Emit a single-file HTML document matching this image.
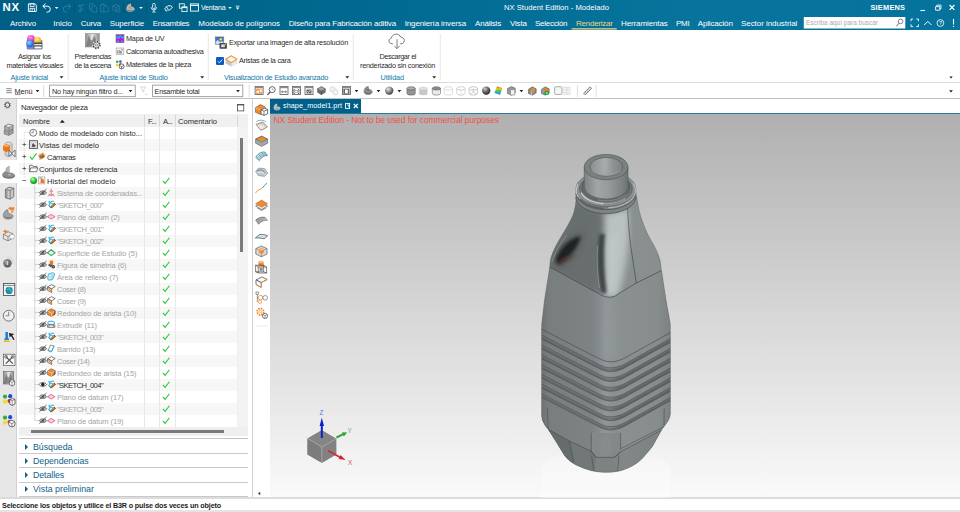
<!DOCTYPE html>
<html><head><meta charset="utf-8"><title>NX Student Edition - Modelado</title>
<style>
*{box-sizing:border-box;margin:0;padding:0}
html,body{width:960px;height:512px;overflow:hidden;background:#fff;font-family:"Liberation Sans",sans-serif}
.t{position:absolute;white-space:nowrap;line-height:12px;height:12px;font-family:"Liberation Sans",sans-serif}
.a{position:absolute}
svg{position:absolute;overflow:visible}
#title{left:0;top:0;width:960px;height:30px;background:linear-gradient(90deg,#005e85 0%,#00678d 30%,#046f97 55%,#06749c 72%,#05739c 100%)}
#ribbon{left:0;top:30px;width:960px;height:52px;background:#fff}
#tb{left:0;top:82px;width:960px;height:16.8px;background:#fff;border-top:1px solid #dcdcdc;border-bottom:1.3px solid #c2c2c2}
.sep{position:absolute;top:34px;width:1px;height:46px;background:#e4e4e4}
.dd{position:absolute;width:0;height:0;border-left:2px solid transparent;border-right:2px solid transparent;border-top:2.4px solid #222}
.combo{position:absolute;top:85px;height:12px;border:1px solid #a8a8a8;background:#fff}
#lbar{left:0;top:99px;width:16.5px;height:399px;background:#e6e6e6;border-right:1px solid #d2d2d2}
#lact{left:0;top:160.3px;width:17px;height:23px;background:#fff}
#nav{left:17px;top:99px;width:235px;height:399px;background:#fff}
#treebg{left:19px;top:114px;width:229px;height:322px;background:#efefef}
#treehd{left:19px;top:114.2px;width:229px;height:12.3px;background:#f0f0f0}
.r{position:absolute;left:19px;width:218px;height:12px;background:#fff}
.r.alt{background:#f7f7f7}
.vl{position:absolute;width:1px;background:#e8e8e8}
.acc{position:absolute;left:19px;width:229px;height:1px;background:#c9c9c9}
.tri{position:absolute;left:25px;width:0;height:0;border-top:3px solid transparent;border-bottom:3px solid transparent;border-left:3.4px solid #0f5f86}
#rline{left:252px;top:99px;width:1px;height:399px;background:#cfcfcf}
#tab{left:270px;top:98.5px;width:91px;height:15px;background:#00608a}
#tabline{left:270px;top:112.5px;width:690px;height:1.4px;background:#2a7a9e}
#view{left:270px;top:114px;width:690px;height:384px;background:linear-gradient(#b0b0b0 0%,#fafafa 100%)}
#status{left:0;top:497.4px;width:960px;height:15px;background:#fff;border-top:2.4px solid #dcdcdc}
#bot{left:0;top:509.8px;width:960px;height:2.2px;background:#e4e4e4}
</style></head>

<body>
<div class="a" id="title"></div>
<div class="a" id="ribbon"></div>
<div class="a" id="tb"></div>
<div class="a" id="lbar"></div><div class="a" id="lact"></div>
<div class="a" id="nav"></div>
<div class="a" id="treebg"></div><div class="a" id="treehd"></div>
<div class="r" style="top:126.5px"></div>
<div class="r alt" style="top:138.5px"></div>
<div class="r" style="top:150.5px"></div>
<div class="r alt" style="top:162.5px"></div>
<div class="r" style="top:174.5px"></div>
<div class="r alt" style="top:186.5px"></div>
<div class="r" style="top:198.5px"></div>
<div class="r alt" style="top:210.5px"></div>
<div class="r" style="top:222.5px"></div>
<div class="r alt" style="top:234.5px"></div>
<div class="r" style="top:246.5px"></div>
<div class="r alt" style="top:258.5px"></div>
<div class="r" style="top:270.5px"></div>
<div class="r alt" style="top:282.5px"></div>
<div class="r" style="top:294.5px"></div>
<div class="r alt" style="top:306.5px"></div>
<div class="r" style="top:318.5px"></div>
<div class="r alt" style="top:330.5px"></div>
<div class="r" style="top:342.5px"></div>
<div class="r alt" style="top:354.5px"></div>
<div class="r" style="top:366.5px"></div>
<div class="r alt" style="top:378.5px"></div>
<div class="r" style="top:390.5px"></div>
<div class="r alt" style="top:402.5px"></div>
<div class="r" style="top:414.5px"></div>
<div class="vl" style="left:144.3px;top:114px;height:312.5px"></div>
<div class="vl" style="left:159.3px;top:114px;height:312.5px"></div>
<div class="vl" style="left:174.5px;top:114px;height:312.5px"></div>
<div class="vl" style="left:144.3px;top:115px;height:11px;background:#d6d6d6"></div>
<div class="vl" style="left:159.3px;top:115px;height:11px;background:#d6d6d6"></div>
<div class="vl" style="left:174.5px;top:115px;height:11px;background:#d6d6d6"></div>
<div class="vl" style="left:237px;top:115px;height:11px;background:#d6d6d6"></div>
<div class="a" style="left:237.5px;top:126.5px;width:10.5px;height:300px;background:#f3f3f3"></div>
<div class="a" style="left:240.2px;top:137.5px;width:2.8px;height:114.5px;background:#7a7a7a"></div>
<div class="a" style="left:31px;top:430px;width:192.5px;height:2.6px;background:#7a7a7a"></div>
<div class="acc" style="top:437.5px;height:1.5px;background:#c4c4c4"></div>
<div class="acc" style="top:453.3px"></div>
<div class="acc" style="top:467.4px"></div>
<div class="acc" style="top:481.5px"></div>
<div class="acc" style="top:495.5px"></div>
<div class="tri" style="top:444px"></div>
<div class="tri" style="top:458px"></div>
<div class="tri" style="top:472.2px"></div>
<div class="tri" style="top:486.3px"></div>
<div class="a" id="rline"></div>
<div class="a" id="view"></div>
<div class="a" id="tab"></div><div class="a" id="tabline"></div>
<div class="a" id="status"></div><div class="a" id="bot"></div>
<svg style="left:0px;top:0px" width="960" height="30" viewBox="0 0 960 30" ><line x1="23.3" y1="2.5" x2="23.3" y2="13" stroke="#00506f" stroke-width="0.8"/><line x1="39.6" y1="2.5" x2="39.6" y2="13" stroke="#00506f" stroke-width="0.8"/><line x1="74.5" y1="2.5" x2="74.5" y2="13" stroke="#00506f" stroke-width="0.8"/><line x1="123.4" y1="2.5" x2="123.4" y2="13" stroke="#00506f" stroke-width="0.8"/><line x1="146.4" y1="2.5" x2="146.4" y2="13" stroke="#00506f" stroke-width="0.8"/><line x1="161.3" y1="2.5" x2="161.3" y2="13" stroke="#00506f" stroke-width="0.8"/><line x1="175.6" y1="2.5" x2="175.6" y2="13" stroke="#00506f" stroke-width="0.8"/><path d="M28.4 3.8h6.6l1.3 1.3v6.4h-7.9z" fill="none" stroke="#fff" stroke-width="0.9"/><rect x="30.2" y="3.8" width="3.8" height="2.6" fill="none" stroke="#fff" stroke-width="0.8"/><rect x="30" y="8.3" width="4.4" height="3.2" fill="none" stroke="#fff" stroke-width="0.8"/><rect x="31.6" y="9.2" width="1.2" height="1.4" fill="#fff"/><path d="M43 6.2h4.3a3 3 0 0 1 0 6h-0.8" fill="none" stroke="#fff" stroke-width="1"/><path d="M45.6 3.6l-2.8 2.6l2.8 2.6" fill="none" stroke="#fff" stroke-width="1"/><path d="M54.8 6.9h3.6l-1.8 2.2z" fill="#fff"/><path d="M70.5 6.2h-4.3a3 3 0 0 0 0 6h0.8" fill="none" stroke="#2f7e9f" stroke-width="1"/><path d="M68 3.6l2.8 2.6l-2.8 2.6" fill="none" stroke="#2f7e9f" stroke-width="1"/><path d="M78 6.5l6.5 -2M78.5 4.5l5 5.8M81.5 7.5l-1.5 3.5" fill="none" stroke="#2f7e9f" stroke-width="0.9"/><circle cx="80" cy="10.8" r="1.1" fill="none" stroke="#2f7e9f" stroke-width="0.8"/><path d="M89.5 3.8h3.6l1.4 1.4v4.6h-5z" fill="none" stroke="#2f7e9f" stroke-width="0.8"/><path d="M91.8 6h3.4l1.6 1.6v4.4h-5z" fill="#00608a" stroke="#2f7e9f" stroke-width="0.8"/><path d="M100.6 4.6h4.6v7.2h-4.6z" fill="none" stroke="#2f7e9f" stroke-width="0.8"/><path d="M103.8 6.2h3l1.6 1.6v4h-4.6z" fill="#00608a" stroke="#2f7e9f" stroke-width="0.8"/><rect x="101.8" y="3.6" width="2.2" height="1.4" fill="#2f7e9f"/><path d="M112.4 6l3.4-1.6l3.4 1.6v4l-3.4 1.6l-3.4-1.6z M112.4 6l3.4 1.6l3.4-1.6 M115.8 7.6v4" fill="none" stroke="#2f7e9f" stroke-width="0.8"/><path d="M117 9.5h3v2.5h-3z" fill="#00608a" stroke="#2f7e9f" stroke-width="0.7"/><path d="M126.3 9.2c0-3.2 2-5.6 4.6-5.8l0.4 3.2c1.6 0.2 3 1 3.4 2.2c0.3 1.6-1.8 3-4.4 3c-2.4 0-4-1.2-4-2.6z" fill="#b9b4ae"/><path d="M127.6 9.8c1 1 3.4 1.4 5.4 0.4" fill="none" stroke="#7b7064" stroke-width="0.9"/><path d="M129 7.2l2.4 1.2" stroke="#8a7a68" stroke-width="0.8"/><path d="M139.2 6.9h3.6l-1.8 2.2z" fill="#fff"/><rect x="152.6" y="3.4" width="2.6" height="5.4" rx="1.3" fill="none" stroke="#fff" stroke-width="0.8"/><path d="M151.2 7.2a2.7 2.7 0 0 0 5.4 0M153.9 10v1.8M152.2 12h3.4" fill="none" stroke="#fff" stroke-width="0.8"/><path d="M164.8 8.8l3-3h3l1.6 1.4l-2.6 2.8h-2.4l-1.2 1.2z" fill="none" stroke="#fff" stroke-width="0.9"/><path d="M166 6.4l2.2 2.8" stroke="#fff" stroke-width="0.8"/><rect x="179.3" y="3.8" width="5" height="4.4" fill="none" stroke="#fff" stroke-width="0.8"/><rect x="181.9" y="6.8" width="5.2" height="4.8" fill="#00648b" stroke="#fff" stroke-width="0.8"/><line x1="181.9" y1="7.6" x2="187.1" y2="7.6" stroke="#fff" stroke-width="1"/><rect x="190.5" y="3.9" width="8" height="7.2" fill="none" stroke="#fff" stroke-width="0.9"/><line x1="190.5" y1="5.4" x2="198.5" y2="5.4" stroke="#fff" stroke-width="1"/><path d="M228.2 6.9h3.6l-1.8 2.2z" fill="#fff"/><line x1="235.8" y1="6.2" x2="239.4" y2="6.2" stroke="#fff" stroke-width="0.8"/><path d="M235.8 7.5h3.6l-1.8 2.2z" fill="#fff"/><line x1="920.4" y1="10.5" x2="925" y2="10.5" stroke="#fff" stroke-width="1.1"/><path d="M935.6 6.6h4.2v3.6h-4.2z M936.8 6.4v-1.3h4.2v3.6h-1.1" fill="none" stroke="#fff" stroke-width="0.9"/><path d="M949.6 5l4.8 4.8M954.4 5l-4.8 4.8" stroke="#fff" stroke-width="1.2"/><rect x="803.8" y="17" width="101.5" height="11.5" fill="#fff"/><circle cx="900.6" cy="21.4" r="2.3" fill="none" stroke="#666" stroke-width="0.8"/><path d="M899 23.2l-2.6 3" stroke="#666" stroke-width="1"/><path d="M911 21.3v-2.3h2.1M916.3 19h2.1v2.3M918.4 24.3v2.3h-2.1M913.1 26.6h-2.1v-2.3" fill="none" stroke="#fff" stroke-width="0.9"/><path d="M924.2 25l3.6-3.6l3.6 3.6" fill="none" stroke="#fff" stroke-width="1"/><circle cx="940.4" cy="23" r="3.4" fill="none" stroke="#fff" stroke-width="0.8"/><text x="940.4" y="25" font-size="5.4" fill="#fff" text-anchor="middle" font-family="Liberation Sans,sans-serif">?</text><line x1="953.5" y1="19" x2="953.5" y2="24.5" stroke="#fff" stroke-width="1.1"/><line x1="953.5" y1="25.8" x2="953.5" y2="27" stroke="#fff" stroke-width="1.1"/><line x1="571.7" y1="28.8" x2="616.7" y2="28.8" stroke="#f0d584" stroke-width="1.2"/></svg>
<svg style="left:0px;top:0px" width="960" height="82" viewBox="0 0 960 82" ><line x1="68.2" y1="34" x2="68.2" y2="80" stroke="#e6e6e6" stroke-width="1"/><line x1="208.3" y1="34" x2="208.3" y2="80" stroke="#e6e6e6" stroke-width="1"/><line x1="353.2" y1="34" x2="353.2" y2="80" stroke="#e6e6e6" stroke-width="1"/><line x1="440.3" y1="34" x2="440.3" y2="80" stroke="#e6e6e6" stroke-width="1"/><path d="M59.6 76.2h3.8l-1.9 2.3z" fill="#222"/><path d="M200.29999999999998 76.2h3.8l-1.9 2.3z" fill="#222"/><path d="M345.40000000000003 76.2h3.8l-1.9 2.3z" fill="#222"/><path d="M432.3 76.2h3.8l-1.9 2.3z" fill="#222"/><path d="M949.3 76.4h3.4l-1.7 2.1z" fill="#222"/><defs><radialGradient id="gm" cx="0.4" cy="0.3" r="0.7"><stop offset="0" stop-color="#ff9af0"/><stop offset="1" stop-color="#c21bb0"/></radialGradient><radialGradient id="gy" cx="0.4" cy="0.3" r="0.7"><stop offset="0" stop-color="#fff08a"/><stop offset="1" stop-color="#f0a500"/></radialGradient><radialGradient id="gb" cx="0.4" cy="0.3" r="0.7"><stop offset="0" stop-color="#8ad2ff"/><stop offset="1" stop-color="#0a62d8"/></radialGradient><linearGradient id="gpref" x1="0" y1="0" x2="1" y2="0"><stop offset="0" stop-color="#8a8a8a"/><stop offset="0.5" stop-color="#e4e4e4"/><stop offset="1" stop-color="#8e8e8e"/></linearGradient><radialGradient id="gball" cx="0.38" cy="0.32" r="0.75"><stop offset="0" stop-color="#e8e8e8"/><stop offset="0.5" stop-color="#8a8a8a"/><stop offset="1" stop-color="#2c2c2c"/></radialGradient></defs><rect x="26.6" y="40" width="15.8" height="9.4" rx="0.8" fill="#7b86c9"/><circle cx="31" cy="38.8" r="3.9" fill="url(#gm)"/><circle cx="37.6" cy="40.4" r="3.6" fill="url(#gy)"/><circle cx="29.8" cy="43.8" r="3.5" fill="url(#gb)"/><rect x="33.6" y="42.6" width="8.6" height="6.2" rx="0.6" fill="#4c4c4c"/><rect x="34.2" y="44" width="7.6" height="1.3" fill="#e8e8e8"/><rect x="34.4" y="46.6" width="7.2" height="1.8" rx="0.5" fill="#fff"/><rect x="85.3" y="33.6" width="14" height="13.4" fill="url(#gpref)" stroke="#8c8c8c" stroke-width="0.6"/><path d="M86 46.6c1.2-2 1.8-9 3-11c1 2 1.4 5 2.6 5c1.2 0 1.600-3.400 2.800-5c1.200 2 2.400 9 4.200 11z" fill="#6e6e6e" opacity="0.75"/><circle cx="96.5" cy="45" r="4.300" fill="#fff"/><circle cx="96.5" cy="45" r="3.500" fill="none" stroke="#444" stroke-width="1.500" stroke-dasharray="1.374 1.374"/><circle cx="96.5" cy="45" r="2.800" fill="#fff" stroke="#444" stroke-width="0.7"/><circle cx="96.5" cy="45" r="1.100" fill="none" stroke="#444" stroke-width="0.600"/><rect x="116" y="34.6" width="8" height="8" fill="#00c8e6" stroke="#555" stroke-width="0.5"/><path d="M116.3 38.600h3.700v-2.200h0l1.600 2.200h2.200v3.700h-7.500z" fill="#e800d8"/><path d="M116.4 34.900l1.800 2.400l1.800-2.400z M120.200 34.900l1.800 2.400l1.800-2.400z" fill="#e800d8"/><path d="M117 42.2l1.200-2.400l1.200 2.400z M120.800 42.200l1.200-2.400l1.200 2.400z" fill="#00c8e6"/><rect x="116.2" y="48" width="7.6" height="6.6" fill="#f2f2f2" stroke="#9a9a9a" stroke-width="0.6"/><path d="M117.300 53.400v-3.200h1.200v3.200M119.200 53.400v-3.800l1.400 1.800l1.200-1.200v3.200z" fill="#8a8a8a"/><rect x="120.8" y="48.800" width="2.200" height="1.600" fill="#b8b8b8"/><circle cx="117.2" cy="61.8" r="1.3" fill="#2fae2f"/><circle cx="120.4" cy="61.6" r="1.3" fill="#3b58d8"/><circle cx="117.2" cy="65" r="1.3" fill="#e8d21a"/><circle cx="120.4" cy="64.6" r="1.3" fill="#d83030"/><circle cx="121.6" cy="66.4" r="2.5" fill="#fff" stroke="#333" stroke-width="0.7"/><path d="M119.600 65.600l2 1l2-1M121.600 66.600v2.200" fill="none" stroke="#333" stroke-width="0.6"/><rect x="215.3" y="36.800" width="8.400" height="7.600" fill="#3a78c8" stroke="#555" stroke-width="0.5" stroke-dasharray="0.8 0.5"/><path d="M215.600 44.100v-2.400l2.200-1.600l2.400 1.800l1.400-0.800l1.800 1.200v1.800z" fill="#d8d8e8"/><circle cx="220.800" cy="39.200" r="1.200" fill="#ffe020"/><rect x="219.500" y="43" width="7.400" height="5.700" rx="0.600" fill="#4a4a4a"/><rect x="221.200" y="44.400" width="3.600" height="2.800" fill="#dcdcdc"/><rect x="224.800" y="43.800" width="1.300" height="0.900" fill="#ffe020"/><rect x="216" y="57" width="8" height="8" rx="1.2" fill="#0a5bc4"/><path d="M217.800 61.200l1.600 1.600l2.900-3.200" fill="none" stroke="#fff" stroke-width="0.9"/><path d="M225.700 59.200l5.600-3.400l5.600 3.400v4.200l-5.600 3.200l-5.600-3.200z" fill="#c4c4c4"/><path d="M231.300 62.600v4l5.600-3.200v-4.200z" fill="#e9e9e9"/><path d="M225.700 59.200l5.600-3.400l5.600 3.400l-5.600 3.400z" fill="#f7f7f7" stroke="#f0973a" stroke-width="1.100" stroke-linejoin="round"/><path d="M392.800 43.800h-0.600c-1.900 0-3.200-1.300-3.200-2.900c0-1.500 1.100-2.600 2.500-2.800c0.300-2.300 2.300-4 4.700-4c2 0 3.700 1.100 4.400 2.900c2.100 0.100 3.700 1.600 3.700 3.500c0 1.900-1.500 3.300-3.500 3.300h-0.400" fill="none" stroke="#5a5a5a" stroke-width="0.800" stroke-linecap="round"/><path d="M397 39.200v9M394.300 46l2.700 2.700l2.700-2.700" fill="none" stroke="#5a5a5a" stroke-width="0.800"/></svg>
<svg style="left:0px;top:0px" width="960" height="100" viewBox="0 0 960 100" ><line x1="6.3" y1="88.7" x2="11.7" y2="88.7" stroke="#555" stroke-width="0.7"/><line x1="6.3" y1="90.7" x2="11.7" y2="90.7" stroke="#555" stroke-width="0.7"/><line x1="6.3" y1="92.7" x2="11.7" y2="92.7" stroke="#555" stroke-width="0.7"/><line x1="15" y1="94.600" x2="20.600" y2="94.600" stroke="#2b2b2b" stroke-width="0.5"/><path d="M35.6 89.9h3.8l-1.9 2.3z" fill="#222"/><line x1="43.7" y1="85" x2="43.7" y2="97" stroke="#dcdcdc" stroke-width="1"/><rect x="49.6" y="85.1" width="85.6" height="11.600" fill="#fff" stroke="#8e8e8e" stroke-width="0.8"/><path d="M128.6 89.9h3.8l-1.9 2.3z" fill="#222"/><path d="M140.600 87h5l-1.800 2.600v2.400l-1.400-0.800v-1.600z" fill="none" stroke="#c8c8c8" stroke-width="0.7"/><path d="M145 92.500l2.800 2.200l-1.600 0.200z" fill="#d0d0d0"/><rect x="152.6" y="85.1" width="90.2" height="11.600" fill="#fff" stroke="#8e8e8e" stroke-width="0.8"/><path d="M236.1 89.9h3.8l-1.9 2.3z" fill="#222"/><line x1="249.2" y1="85" x2="249.2" y2="97" stroke="#dcdcdc" stroke-width="1"/><rect x="255.1" y="86.500" width="8" height="8" fill="#fff" stroke="#555" stroke-width="0.8"/><rect x="255.1" y="86.500" width="8" height="1.700" fill="#8c8c8c"/><rect x="256" y="88.800" width="6.200" height="5" fill="#f59a3c"/><rect x="256.600" y="90.600" width="2.400" height="2.200" fill="#fff"/><rect x="259.800" y="89.400" width="1.800" height="2.600" fill="#fff"/><circle cx="272.2" cy="89.600" r="3" fill="#fff" stroke="#555" stroke-width="0.9"/><path d="M270.200 92l-2.800 2.900" stroke="#555" stroke-width="1.300"/><path d="M272.200 88v1.800h1.400" fill="none" stroke="#777" stroke-width="0.6"/><rect x="280" y="86.500" width="8" height="8" fill="#fff" stroke="#555" stroke-width="0.8"/><rect x="280" y="86.500" width="8" height="1.700" fill="#8c8c8c"/><path d="M281.500 91.800h5M281.500 91.800l1.200-1M281.500 91.800l1.200 1M286.500 91.800l-1.200-1M286.500 91.800l-1.200 1" stroke="#333" stroke-width="0.6" fill="none"/><rect x="292.4" y="86.500" width="8" height="8" fill="#fff" stroke="#555" stroke-width="0.8"/><rect x="292.4" y="86.500" width="8" height="1.700" fill="#8c8c8c"/><path d="M294.800 89.500h-1v4h1M298 89.500h1v4h-1" stroke="#333" stroke-width="0.7" fill="none"/><rect x="295" y="90.300" width="2.800" height="2.400" fill="none" stroke="#777" stroke-width="0.5"/><rect x="305" y="86.500" width="8" height="8" fill="#fff" stroke="#555" stroke-width="0.8"/><rect x="305" y="86.500" width="8" height="1.700" fill="#8c8c8c"/><rect x="306.500" y="89.500" width="5" height="4" fill="#666"/><path d="M307.200 91.400l1.200 1.200l2.200-2.600" stroke="#fff" stroke-width="0.7" fill="none"/><path d="M317.200 89l4.200-2.400l4.200 2.400v3.600l-4.200 2.400l-4.200-2.400z" fill="#6e6e6e"/><path d="M317.200 89l4.200 2.200l4.200-2.200l-4.200-2.400z" fill="#a4a4a4" stroke="#444" stroke-width="0.5"/><path d="M321.400 91.200v3.800" stroke="#333" stroke-width="0.5"/><circle cx="332.6" cy="89.300" r="2.600" fill="#f4f4f4" stroke="#d2d2d2" stroke-width="0.8"/><circle cx="335.4" cy="92.200" r="2.600" fill="#f4f4f4" stroke="#d2d2d2" stroke-width="0.8"/><rect x="342.4" y="86.500" width="8" height="8" fill="#fff" stroke="#555" stroke-width="0.8"/><rect x="342.4" y="86.500" width="8" height="1.700" fill="#8c8c8c"/><rect x="343.300" y="88.700" width="6.200" height="5.200" fill="#6a6a6a"/><rect x="345" y="89.600" width="2.800" height="3.600" fill="#fff"/><path d="M354.6 89.9h3.8l-1.9 2.3z" fill="#222"/><path d="M364 91.600c0-3 1.800-5 4.200-5.200l0.400 2.800c1.600 0.200 3.200 1 3.600 2.200c0.300 1.800-1.800 3.200-4.400 3.200c-2.400 0-3.800-1.400-3.800-3z" fill="#8f8f8f" stroke="#555" stroke-width="0.5"/><path d="M365.200 92.400c1.200 1 3.600 1.200 5.600 0.200M366.400 89.400l3 1.400" fill="none" stroke="#444" stroke-width="0.6"/><path d="M376.6 89.9h3.8l-1.9 2.3z" fill="#222"/><circle cx="389.2" cy="90.600" r="4.200" fill="url(#gball)"/><path d="M397.5 89.9h3.8l-1.9 2.3z" fill="#222"/><path d="M407 88.400v5a4.100 1.700 0 0 0 8.200 0v-5z" fill="#959595" stroke="#555" stroke-width="0.6"/><ellipse cx="411.1" cy="88.400" rx="4.100" ry="1.700" fill="#b0b0b0" stroke="#555" stroke-width="0.6"/><path d="M419.2 88.400v5a4.100 1.700 0 0 0 8.200 0v-5z" fill="#c6c6c6" stroke="#cfcfcf" stroke-width="0.3"/><ellipse cx="423.3" cy="88.400" rx="4.100" ry="1.700" fill="#dedede" stroke="#cfcfcf" stroke-width="0.3"/><path d="M432.3 88.400v5a4.100 1.700 0 0 0 8.200 0v-5z" fill="#ececec" stroke="#666" stroke-width="0.6"/><ellipse cx="436.40000000000003" cy="88.400" rx="4.100" ry="1.700" fill="#8a8a8a" stroke="#666" stroke-width="0.6"/><path d="M444.2 88.400v5a4.100 1.700 0 0 0 8.200 0v-5z" fill="#fff" stroke="#c4c4c4" stroke-width="0.6"/><ellipse cx="448.3" cy="88.400" rx="4.100" ry="1.700" fill="#fff" stroke="#c4c4c4" stroke-width="0.6"/><path d="M456.8 88.400v5a4.100 1.700 0 0 0 8.200 0v-5z" fill="#fff" stroke="#b4b4b4" stroke-width="0.6"/><ellipse cx="460.90000000000003" cy="88.400" rx="4.100" ry="1.700" fill="#fff" stroke="#b4b4b4" stroke-width="0.6"/><path d="M460.900 90.100v5" stroke="#b4b4b4" stroke-width="0.5" stroke-dasharray="1 0.6"/><path d="M469.2 88.400v5a4.100 1.700 0 0 0 8.200 0v-5z" fill="#fff" stroke="#a4a4a4" stroke-width="0.6"/><ellipse cx="473.3" cy="88.400" rx="4.100" ry="1.700" fill="#fff" stroke="#a4a4a4" stroke-width="0.6"/><path d="M470 94l3.300-2l3.300 2M473.300 88.400v3.600" stroke="#a4a4a4" stroke-width="0.5" fill="none"/><defs><radialGradient id="gball2" cx="0.36" cy="0.3" r="0.75"><stop offset="0" stop-color="#d0d0d0"/><stop offset="0.45" stop-color="#6e6e6e"/><stop offset="1" stop-color="#1e1e1e"/></radialGradient><linearGradient id="grain" x1="0" y1="0" x2="0" y2="1"><stop offset="0" stop-color="#f04a28"/><stop offset="0.3" stop-color="#f0c828"/><stop offset="0.55" stop-color="#38c848"/><stop offset="0.8" stop-color="#28a8e8"/><stop offset="1" stop-color="#2848d8"/></linearGradient></defs><circle cx="486.200" cy="90.600" r="4.200" fill="url(#gball2)"/><path d="M497 86.400l5.400 1.600l-2.400 6.800l-5.600-1.800z" fill="url(#grain)"/><path d="M507.400 88.600l3.800-2l4 1.400v5l-3.600 2.200l-4.200-1.600z" fill="#9a9a9a" stroke="#555" stroke-width="0.5"/><path d="M510.400 89.600h4.400v5.400h-4.400z" fill="#f2f2f2" stroke="#666" stroke-width="0.5"/><path d="M519.5 89.9h3.8l-1.9 2.3z" fill="#222"/><path d="M528.400 89.400l3.800-2.600l4 2v4l-3.800 2.400l-4-1.800z" fill="#8a8a8a" stroke="#444" stroke-width="0.5"/><path d="M530.400 91l2.600-3.400l2.200 1.200l-1.600 4z" fill="#f08a2c"/><path d="M531.400 95v-3.400" stroke="#fff" stroke-width="0.6"/><path d="M541.400 89.400l3.800-2.600l4 2v4l-3.800 2.400l-4-1.800z" fill="#9a9a9a" stroke="#444" stroke-width="0.5"/><path d="M544.400 87.600l3.400 1.400v3.600l-3.400-1z" fill="#f07a1c"/><ellipse cx="546.800" cy="93" rx="2.600" ry="2" fill="#18a838"/><ellipse cx="546.800" cy="93" rx="1" ry="0.700" fill="#d8f0d8"/><rect x="554.600" y="86.700" width="7.400" height="7.800" rx="1.300" fill="#f4f4f4" stroke="#9a9a9a" stroke-width="0.8"/><line x1="563.200" y1="87.3" x2="570.800" y2="87.3" stroke="#c4c4c4" stroke-width="0.6"/><line x1="563.200" y1="89.1" x2="570.800" y2="89.1" stroke="#c4c4c4" stroke-width="0.6"/><line x1="563.200" y1="90.9" x2="570.800" y2="90.9" stroke="#c4c4c4" stroke-width="0.6"/><line x1="563.200" y1="92.7" x2="570.800" y2="92.7" stroke="#c4c4c4" stroke-width="0.6"/><line x1="563.200" y1="94.3" x2="570.800" y2="94.3" stroke="#c4c4c4" stroke-width="0.6"/><line x1="567" y1="87" x2="567" y2="94.500" stroke="#d4d4d4" stroke-width="0.5"/><line x1="577.4" y1="85" x2="577.4" y2="97" stroke="#e0e0e0" stroke-width="1"/><path d="M583.600 93.200l6.400-6.400l1.600 1.600l-6.400 6.400z" fill="#dedede" stroke="#555" stroke-width="0.7"/><path d="M585.600 92.400l0.800 0.800M587 91l0.800 0.800M588.400 89.600l0.800 0.800" stroke="#555" stroke-width="0.4"/><line x1="596.200" y1="85" x2="596.200" y2="97" stroke="#e0e0e0" stroke-width="1"/><path d="M949.1 90.30000000000001h3.8l-1.9 2.3z" fill="#222"/></svg>
<svg style="left:0px;top:0px" width="20" height="512" viewBox="0 0 20 512" ><circle cx="7.400" cy="105" r="2.300" fill="none" stroke="#444" stroke-width="0.9"/><circle cx="7.400" cy="105" r="3.100" fill="none" stroke="#444" stroke-width="0.9" stroke-dasharray="1 1.430"/><path d="M4.200 130.600l4-2l5 1.200v3.400l-4.400 2.200l-4.600-1.400z" fill="#a2a2a2" stroke="#5a5a5a" stroke-width="0.5"/><path d="M4.200 130.600l4-2l5 1.200l-4.400 2z" fill="#e2e2e2" stroke="#5a5a5a" stroke-width="0.5"/><path d="M4.600 126.200l4-2l4.600 1.200v3.400l-4.200 2l-4.400-1.200z" fill="#acacac" stroke="#5a5a5a" stroke-width="0.5"/><path d="M4.600 126.200l4-2l4.600 1.200l-4.200 2z" fill="#ececec" stroke="#5a5a5a" stroke-width="0.5"/><path d="M9 127.400v3.400" stroke="#5a5a5a" stroke-width="0.5"/><path d="M8.800 131.800v3.400" stroke="#5a5a5a" stroke-width="0.5"/><ellipse cx="8.600" cy="143.800" rx="3.500" ry="1.700" fill="#e0e0e0" stroke="#777" stroke-width="0.5"/><path d="M5.100 143.800v10.800a3.500 1.700 0 0 0 7 0v-10.800" fill="#cfcfcf" stroke="#777" stroke-width="0.5"/><path d="M3 145.800l3.400-1.600l3.600 1.400v4.800l-3.600 1.600l-3.400-1.600z" fill="#f07818"/><path d="M3 145.800l3.400 1.400l3.600-1.600l-3.600-1.400z" fill="#f8a858"/><path d="M6.400 147.200v4.800" stroke="#d86408" stroke-width="0.5"/><path d="M9 150.400l6 6.400v-6.800l-6 6.400z" fill="#fff" stroke="#444" stroke-width="0.7" stroke-linejoin="round"/><path d="M2.600 174.600c0-1.400 1.400-2.600 3.200-3.200l0.200-2.200c0.400-1.600 1.800-2.600 3.400-2.600v6.200c3 0.200 5.400 1.400 5.400 2.800c0 1.600-2.800 2.600-6.200 2.600c-3.400 0-6-1.200-6-3.600z" fill="#8c8c8c" stroke="#666" stroke-width="0.4"/><path d="M6 169.200c0.400-1.600 1.800-2.600 3.400-2.600v6.200l-3.400-1.200z" fill="#b4b4b4"/><path d="M2.600 174.600c0.400 2 3 3 6 3c3.400 0 6.200-1 6.200-2.600v1c0 1.600-2.800 2.600-6.200 2.600c-3.400 0-6-1.200-6-3z" fill="#6e6e6e"/><ellipse cx="9.600" cy="174.800" rx="2" ry="0.900" fill="#d4d4d4" stroke="#666" stroke-width="0.4"/><path d="M9.400 166.600v6.200" stroke="#e0e0e0" stroke-width="0.5"/><path d="M5.400 189.400l3.400-2.200l5 1v8.400l-3.600 2.600l-4.800-1.400z" fill="#c8c8c8" stroke="#555" stroke-width="0.7"/><path d="M5.400 189.400l4.800 1.200l3.600-2.400M10.200 190.600v8.600M6.800 190.200v7.800" fill="none" stroke="#555" stroke-width="0.6"/><g transform="translate(0,3.2)"><path d="M3.200 212.800c0-3.200 2-6 4.600-6.400l0.600 3.800c2.200 0.200 4.200 1.200 4.800 2.400c0.400 2-2 3.400-5 3.400c-3 0-5-1.200-5-3.200z" fill="#a2a2a2" stroke="#666" stroke-width="0.5"/><path d="M4.800 213.600c1.600 1.200 4.400 1.400 6.600 0.400" fill="none" stroke="#555" stroke-width="0.7"/><path d="M8.600 205.200l2.400-1.400v2.800zM13.800 204.200l-2.600 1l2.400 1.600zM11.600 206.400l0.400 3.400M13.200 206.600l-0.800 3.200" stroke="#f07818" stroke-width="0.8" fill="#f07818"/></g><path d="M3.400 234.400l4.800-2.600l4.600 2v4.400l-4.800 2.600l-4.600-2z" fill="#e6e6e6" stroke="#555" stroke-width="0.6"/><path d="M3.400 234.400l4.600 2l4.800-2.600M8 236.400v4.400" fill="none" stroke="#555" stroke-width="0.6"/><circle cx="12" cy="236.600" r="2.400" fill="#fff" stroke="#888" stroke-width="0.5"/><path d="M3 231.200l3-1.800v1.400h2.400v1h-2.400v1.400z" fill="#f07818"/><defs><radialGradient id="gi" cx="0.4" cy="0.35" r="0.7"><stop offset="0" stop-color="#a8a8a8"/><stop offset="1" stop-color="#4a4a4a"/></radialGradient></defs><path d="M7 257.200a5.600 5.600 0 0 1 6 6" fill="none" stroke="#cfcfcf" stroke-width="0.8"/><circle cx="7.400" cy="263.200" r="4.200" fill="url(#gi)"/><rect x="6.900" y="261.400" width="1" height="3.600" fill="#ddd"/><rect x="3.400" y="283.400" width="11.400" height="12" fill="#f4f4f4" stroke="#444" stroke-width="0.8"/><line x1="3.400" y1="285.400" x2="14.800" y2="285.400" stroke="#444" stroke-width="0.6"/><circle cx="9.100" cy="290.400" r="3.600" fill="#1890a8"/><path d="M6.600 289.200c1.200 0.600 2.200-0.800 3.400 0.200c0.800 0.800 0.200 2 1.600 2.400M8.400 287.200c0.400 1 1.600 0.800 2 0" fill="none" stroke="#9adcec" stroke-width="0.6"/><circle cx="8.700" cy="315.700" r="5.400" fill="#f0f0f0" stroke="#555" stroke-width="0.8"/><path d="M8.700 311.800v4h-3" fill="none" stroke="#555" stroke-width="0.7"/><g transform="translate(0,2.5)"><path d="M5.400 329.400h2.600v5.600l1.400 2.600h-5.400l1.400-2.600z" fill="#1e7fe0"/><path d="M3.800 338.800h5.800" stroke="#e8b800" stroke-width="1.400"/><path d="M9 330.400l5.400 1.200l-2.200 1.200l2.400 4.200l-1.200 0.600l-2.400-4.200l-1.400 1.600z" fill="#222"/></g><g transform="translate(0,2)"><rect x="3.600" y="352.200" width="11.400" height="11.200" fill="#f6f6f6" stroke="#555" stroke-width="0.7"/><path d="M5.600 354.400l7.200 7.200M13 354.400l-7.200 7.200" stroke="#555" stroke-width="1.300"/><circle cx="6" cy="354.800" r="1.400" fill="none" stroke="#555" stroke-width="0.7"/><circle cx="12.600" cy="354.800" r="1.400" fill="none" stroke="#555" stroke-width="0.7"/></g><g transform="translate(0,3)"><rect x="3.400" y="368.400" width="10.200" height="12.600" fill="url(#gpref)" stroke="#666" stroke-width="0.6"/><path d="M3.800 380.600c1-2 1.400-8 2.400-10c0.800 1.800 1.200 4 2.200 4c1 0 1.400-2.400 2.400-4c1 2 1.600 8 2.400 10z" fill="#555" opacity="0.600"/><path d="M9.400 378l2.600-1.400l2.600 1.400v3.600l-2.600 1.400l-2.600-1.400z" fill="#fff" stroke="#333" stroke-width="0.6"/><path d="M9.400 378l2.600 1.400l2.600-1.400M12 379.400v3.600" fill="none" stroke="#333" stroke-width="0.5"/></g><circle cx="5" cy="396.6" r="2.100" fill="#2fae3f"/><circle cx="10.200" cy="396.2" r="2.100" fill="#2848d8"/><circle cx="5" cy="401.6" r="2.100" fill="#f0e020"/><circle cx="9.600" cy="401" r="2.100" fill="#d82828"/><path d="M9.800 399.6l2.800-1l2.400 0.800v4.600l-2.800 1.400l-2.400-1.200z" fill="#fff" stroke="#333" stroke-width="0.7"/><path d="M9.800 399.6l2.400 1l2.800-1.200M12.200 400.6v4.800" fill="none" stroke="#333" stroke-width="0.5"/><circle cx="5" cy="417.6" r="2.100" fill="#2fae3f"/><circle cx="10.200" cy="417.2" r="2.100" fill="#2848d8"/><circle cx="5" cy="422.6" r="2.100" fill="#f0e020"/><circle cx="9.600" cy="422" r="2.100" fill="#d82828"/><circle cx="11.800" cy="423.6" r="3.300" fill="#fff" stroke="#333" stroke-width="0.7"/><path d="M9.200 422.4l2.600 1.200l2.600-1.200M11.800 423.6v3" fill="none" stroke="#333" stroke-width="0.600"/></svg>
<svg style="left:0px;top:0px" width="252" height="440" viewBox="0 0 252 440" ><rect x="237.600" y="104.500" width="6.200" height="6.400" fill="#fff" stroke="#333" stroke-width="0.7"/><line x1="237.600" y1="105" x2="243.800" y2="105" stroke="#333" stroke-width="0.7"/><path d="M59.800 122.800h5l-2.500-3z" fill="#222"/><line x1="24.250" y1="132.5" x2="24.250" y2="178.0" stroke="#aaaaaa" stroke-width="0.55" stroke-dasharray="0.6 0.8"/><line x1="24.250" y1="132.5" x2="29" y2="132.5" stroke="#aaaaaa" stroke-width="0.55" stroke-dasharray="0.6 0.8"/><line x1="26.500" y1="144.5" x2="29" y2="144.5" stroke="#aaaaaa" stroke-width="0.55" stroke-dasharray="0.6 0.8"/><line x1="26.500" y1="156.5" x2="29" y2="156.5" stroke="#aaaaaa" stroke-width="0.55" stroke-dasharray="0.6 0.8"/><line x1="26.500" y1="168.5" x2="29" y2="168.5" stroke="#aaaaaa" stroke-width="0.55" stroke-dasharray="0.6 0.8"/><rect x="22.200" y="142.4" width="4.200" height="4.200" fill="#fff"/><line x1="22.400" y1="144.5" x2="26.100" y2="144.5" stroke="#3a3a3a" stroke-width="0.7"/><line x1="24.250" y1="142.65" x2="24.250" y2="146.35" stroke="#3a3a3a" stroke-width="0.7"/><rect x="22.200" y="154.4" width="4.200" height="4.200" fill="#fff"/><line x1="22.400" y1="156.5" x2="26.100" y2="156.5" stroke="#3a3a3a" stroke-width="0.7"/><line x1="24.250" y1="154.65" x2="24.250" y2="158.35" stroke="#3a3a3a" stroke-width="0.7"/><rect x="22.200" y="166.4" width="4.200" height="4.200" fill="#fff"/><line x1="22.400" y1="168.5" x2="26.100" y2="168.5" stroke="#3a3a3a" stroke-width="0.7"/><line x1="24.250" y1="166.65" x2="24.250" y2="170.35" stroke="#3a3a3a" stroke-width="0.7"/><rect x="22.200" y="178.4" width="4.200" height="4.200" fill="#fff"/><line x1="22.400" y1="180.5" x2="26.100" y2="180.5" stroke="#3a3a3a" stroke-width="0.7"/><circle cx="33.200" cy="132.7" r="3.500" fill="#fff" stroke="#444" stroke-width="0.7"/><path d="M33.200 130.3v2.600h-2" fill="none" stroke="#444" stroke-width="0.600"/><rect x="29.500" y="140.7" width="8" height="7.800" fill="#f2f2f2" stroke="#444" stroke-width="0.8"/><rect x="31" y="142.1" width="5" height="5" fill="#fff" stroke="#888" stroke-width="0.4"/><path d="M31.800 145.9c0-1.600 0.800-2.800 2-3l0.200 1.600c0.800 0 1.600 0.600 1.600 1.200c0 0.800-1 1.200-2 1.200c-1 0-1.800-0.400-1.800-1z" fill="#555"/><path d="M30 156.7l2 2.600l4.600-6" fill="none" stroke="#20c838" stroke-width="1.100"/><path d="M38 155.3l5-3l2.400 4.400l-5 3z" fill="#f59a3c"/><path d="M39.400 156.3l4-2l1.200 2.400l-2.400 2l-2.200 0.400z" fill="#8a6a4a"/><path d="M38.200 159.9l3-2.400l0.800 1.200z" fill="#c8a888"/><path d="M43.600 153.5l1.800 0.600l-0.600 1.600" fill="none" stroke="#f8c080" stroke-width="0.600"/><path d="M29.600 171.7v-6.400h2.800l0.800 1.200h3.800v1.400" fill="none" stroke="#444" stroke-width="0.7"/><path d="M29.600 171.7l1.200-3.800h7l-1.200 3.800z" fill="#fff" stroke="#444" stroke-width="0.7" stroke-linejoin="round"/><defs><radialGradient id="ggr" cx="0.38" cy="0.32" r="0.7"><stop offset="0" stop-color="#c8ffc0"/><stop offset="0.45" stop-color="#38d838"/><stop offset="1" stop-color="#0c8a1c"/></radialGradient></defs><circle cx="33.600" cy="180.5" r="3.500" fill="url(#ggr)"/><rect x="38.300" y="176.9" width="6.600" height="7" fill="#f4f4f4" stroke="#9a9a9a" stroke-width="0.6"/><rect x="40.600" y="179.5" width="3.600" height="3.600" fill="#f07818"/><path d="M39.400 178.1h2.400v2" fill="none" stroke="#555" stroke-width="0.6"/><line x1="24.250" y1="180.5" x2="29.800" y2="180.5" stroke="#9a9a9a" stroke-width="0" /><line x1="34.750" y1="184.5" x2="34.750" y2="420.5" stroke="#c4c4c4" stroke-width="0.7"/><path d="M163 180.8l2.100 2.500l4.300-5.600" fill="none" stroke="#1fc737" stroke-width="1.050"/><path d="M163 192.8l2.100 2.500l4.300-5.600" fill="none" stroke="#1fc737" stroke-width="1.050"/><path d="M163 204.8l2.100 2.500l4.300-5.600" fill="none" stroke="#1fc737" stroke-width="1.050"/><path d="M163 216.8l2.100 2.500l4.300-5.600" fill="none" stroke="#1fc737" stroke-width="1.050"/><path d="M163 228.8l2.100 2.500l4.300-5.600" fill="none" stroke="#1fc737" stroke-width="1.050"/><path d="M163 240.8l2.100 2.500l4.300-5.600" fill="none" stroke="#1fc737" stroke-width="1.050"/><path d="M163 252.8l2.100 2.500l4.300-5.600" fill="none" stroke="#1fc737" stroke-width="1.050"/><path d="M163 264.8l2.100 2.500l4.300-5.600" fill="none" stroke="#1fc737" stroke-width="1.050"/><path d="M163 276.8l2.100 2.500l4.300-5.600" fill="none" stroke="#1fc737" stroke-width="1.050"/><path d="M163 288.8l2.100 2.500l4.300-5.600" fill="none" stroke="#1fc737" stroke-width="1.050"/><path d="M163 300.8l2.100 2.500l4.300-5.600" fill="none" stroke="#1fc737" stroke-width="1.050"/><path d="M163 312.8l2.100 2.500l4.300-5.600" fill="none" stroke="#1fc737" stroke-width="1.050"/><path d="M163 324.8l2.100 2.500l4.300-5.600" fill="none" stroke="#1fc737" stroke-width="1.050"/><path d="M163 336.8l2.100 2.500l4.300-5.600" fill="none" stroke="#1fc737" stroke-width="1.050"/><path d="M163 348.8l2.100 2.500l4.300-5.600" fill="none" stroke="#1fc737" stroke-width="1.050"/><path d="M163 360.8l2.100 2.500l4.300-5.600" fill="none" stroke="#1fc737" stroke-width="1.050"/><path d="M163 372.8l2.100 2.500l4.300-5.600" fill="none" stroke="#1fc737" stroke-width="1.050"/><path d="M163 384.8l2.100 2.500l4.300-5.600" fill="none" stroke="#1fc737" stroke-width="1.050"/><path d="M163 396.8l2.100 2.500l4.300-5.600" fill="none" stroke="#1fc737" stroke-width="1.050"/><path d="M163 408.8l2.100 2.500l4.300-5.600" fill="none" stroke="#1fc737" stroke-width="1.050"/><path d="M163 420.8l2.100 2.500l4.300-5.600" fill="none" stroke="#1fc737" stroke-width="1.050"/><line x1="34.750" y1="192.5" x2="38.500" y2="192.5" stroke="#c4c4c4" stroke-width="0.7"/><path d="M39.200 192.7c1.600-2.500 5.800-2.500 7.400 0c-1.600 2.500-5.800 2.500-7.400 0z" fill="#b8b8b8" stroke="#555" stroke-width="0.7"/><circle cx="42.900" cy="192.7" r="1.300" fill="#666"/><path d="M39.400 195.7l7-6.600" stroke="#444" stroke-width="0.8"/><path d="M51.200 188.7v5.400M51.200 194.1l-3.400 2M51.200 194.1l3.400 2M49.400 191.9l1.800-1.400l1.800 1.400M48.600 193.9l2.600 1.800l2.600-1.800" fill="none" stroke="#e0607c" stroke-width="0.8"/><line x1="34.750" y1="204.5" x2="38.500" y2="204.5" stroke="#c4c4c4" stroke-width="0.7"/><path d="M39.200 204.7c1.600-2.500 5.800-2.500 7.400 0c-1.600 2.500-5.800 2.500-7.400 0z" fill="#b8b8b8" stroke="#555" stroke-width="0.7"/><circle cx="42.900" cy="204.7" r="1.300" fill="#666"/><path d="M39.400 207.7l7-6.600" stroke="#444" stroke-width="0.8"/><path d="M48.200 202.1l1.400-0.800v5.800M50.800 201.3h3.400M51 201.3l-0.400 2.400c1.800-0.600 3 0.200 3 1.400c0 1.600-1.800 2.400-3.600 1.800M48 204.7c1.200 1.600 1.600 2.400 3 3" fill="none" stroke="#28a8d8" stroke-width="0.9"/><path d="M50.600 207.9l0.600-2l3-2.800l1.400 1.400l-3 2.800z" fill="#c87828" stroke="#3a2a1a" stroke-width="0.4"/><path d="M54.200 203.1l1.400 1.400" stroke="#333" stroke-width="0.7"/><line x1="34.750" y1="216.5" x2="38.500" y2="216.5" stroke="#c4c4c4" stroke-width="0.7"/><path d="M39.200 216.7c1.600-2.500 5.800-2.500 7.400 0c-1.600 2.500-5.800 2.500-7.400 0z" fill="#b8b8b8" stroke="#555" stroke-width="0.7"/><circle cx="42.900" cy="216.7" r="1.300" fill="#666"/><path d="M39.400 219.7l7-6.600" stroke="#444" stroke-width="0.8"/><path d="M47.300 216.7l3.900-2.300l3.900 2.300l-3.900 2.300z" fill="#f8d0dc" stroke="#e8608c" stroke-width="0.9"/><line x1="34.750" y1="228.5" x2="38.500" y2="228.5" stroke="#c4c4c4" stroke-width="0.7"/><path d="M39.200 228.7c1.600-2.500 5.800-2.500 7.400 0c-1.600 2.500-5.800 2.500-7.400 0z" fill="#b8b8b8" stroke="#555" stroke-width="0.7"/><circle cx="42.900" cy="228.7" r="1.300" fill="#666"/><path d="M39.400 231.7l7-6.600" stroke="#444" stroke-width="0.8"/><path d="M48.200 226.1l1.400-0.800v5.800M50.800 225.3h3.400M51 225.3l-0.400 2.400c1.800-0.600 3 0.200 3 1.400c0 1.600-1.800 2.400-3.600 1.800M48 228.7c1.200 1.600 1.600 2.400 3 3" fill="none" stroke="#28a8d8" stroke-width="0.9"/><path d="M50.600 231.9l0.600-2l3-2.800l1.400 1.400l-3 2.800z" fill="#c87828" stroke="#3a2a1a" stroke-width="0.4"/><path d="M54.200 227.1l1.400 1.400" stroke="#333" stroke-width="0.7"/><line x1="34.750" y1="240.5" x2="38.500" y2="240.5" stroke="#c4c4c4" stroke-width="0.7"/><path d="M39.200 240.7c1.600-2.500 5.800-2.500 7.400 0c-1.600 2.500-5.800 2.500-7.400 0z" fill="#b8b8b8" stroke="#555" stroke-width="0.7"/><circle cx="42.900" cy="240.7" r="1.300" fill="#666"/><path d="M39.400 243.7l7-6.600" stroke="#444" stroke-width="0.8"/><path d="M48.200 238.1l1.400-0.800v5.800M50.800 237.3h3.400M51 237.3l-0.400 2.400c1.800-0.600 3 0.200 3 1.400c0 1.600-1.800 2.400-3.600 1.800M48 240.7c1.200 1.600 1.600 2.400 3 3" fill="none" stroke="#28a8d8" stroke-width="0.9"/><path d="M50.600 243.9l0.600-2l3-2.800l1.400 1.400l-3 2.800z" fill="#c87828" stroke="#3a2a1a" stroke-width="0.4"/><path d="M54.200 239.1l1.400 1.400" stroke="#333" stroke-width="0.7"/><line x1="34.750" y1="252.5" x2="38.500" y2="252.5" stroke="#c4c4c4" stroke-width="0.7"/><path d="M39.200 252.7c1.600-2.500 5.800-2.500 7.400 0c-1.600 2.500-5.800 2.500-7.400 0z" fill="#b8b8b8" stroke="#555" stroke-width="0.7"/><circle cx="42.900" cy="252.7" r="1.300" fill="#666"/><path d="M39.400 255.7l7-6.600" stroke="#444" stroke-width="0.8"/><path d="M47.300 252.7l3.900-2.900l3.900 2.900l-3.900 2.900z" fill="#e4f2ea" stroke="#38a868" stroke-width="1.100"/><line x1="34.750" y1="264.5" x2="38.500" y2="264.5" stroke="#c4c4c4" stroke-width="0.7"/><path d="M39.200 264.7c1.600-2.500 5.800-2.500 7.400 0c-1.600 2.500-5.800 2.500-7.400 0z" fill="#b8b8b8" stroke="#555" stroke-width="0.7"/><circle cx="42.900" cy="264.7" r="1.300" fill="#666"/><path d="M39.400 267.7l7-6.600" stroke="#444" stroke-width="0.8"/><path d="M48 265.1l2.400-2l2.400 2l-2.400 2.200z" fill="#555"/><rect x="49.800" y="260.5" width="3.400" height="4.200" rx="0.800" fill="#f07818"/><circle cx="53.200" cy="266.7" r="1.800" fill="#333"/><circle cx="53.200" cy="266.7" r="0.700" fill="#bbb"/><line x1="34.750" y1="276.5" x2="38.500" y2="276.5" stroke="#c4c4c4" stroke-width="0.7"/><path d="M39.200 276.7c1.600-2.500 5.800-2.500 7.400 0c-1.600 2.500-5.800 2.500-7.400 0z" fill="#b8b8b8" stroke="#555" stroke-width="0.7"/><circle cx="42.900" cy="276.7" r="1.300" fill="#666"/><path d="M39.400 279.7l7-6.600" stroke="#444" stroke-width="0.8"/><path d="M48.600 273.9l4.600-1.200l1.600 1.400l-2.400 5.600l-4.200 0.400c-1-2 0-4.600 0.400-6.200z" fill="#d8f0f8" stroke="#28a8d8" stroke-width="0.9"/><path d="M50 278.5l2-4.400M51.600 278.7l2-4.400" stroke="#6ac4e4" stroke-width="0.600"/><line x1="34.750" y1="288.5" x2="38.500" y2="288.5" stroke="#c4c4c4" stroke-width="0.7"/><path d="M39.200 288.7c1.600-2.500 5.800-2.500 7.400 0c-1.600 2.500-5.800 2.500-7.400 0z" fill="#b8b8b8" stroke="#555" stroke-width="0.7"/><circle cx="42.900" cy="288.7" r="1.300" fill="#666"/><path d="M39.400 291.7l7-6.600" stroke="#444" stroke-width="0.8"/><path d="M47.600 286.9l3.800-2.200l3.800 1.800l-3.600 2.400z" fill="#fff" stroke="#444" stroke-width="0.7"/><path d="M47.600 286.9v3.400l4 2.200v-3.600z" fill="#f4f4f4" stroke="#444" stroke-width="0.7"/><path d="M48.200 287.5l3.200 4.400" stroke="#f08a2c" stroke-width="1.200"/><line x1="34.750" y1="300.5" x2="38.500" y2="300.5" stroke="#c4c4c4" stroke-width="0.7"/><path d="M39.200 300.7c1.600-2.500 5.800-2.500 7.400 0c-1.600 2.500-5.800 2.500-7.400 0z" fill="#b8b8b8" stroke="#555" stroke-width="0.7"/><circle cx="42.900" cy="300.7" r="1.300" fill="#666"/><path d="M39.400 303.7l7-6.600" stroke="#444" stroke-width="0.8"/><path d="M47.600 298.9l3.800-2.200l3.800 1.800l-3.600 2.400z" fill="#fff" stroke="#444" stroke-width="0.7"/><path d="M47.600 298.9v3.400l4 2.200v-3.600z" fill="#f4f4f4" stroke="#444" stroke-width="0.7"/><path d="M48.200 299.5l3.200 4.400" stroke="#f08a2c" stroke-width="1.200"/><line x1="34.750" y1="312.5" x2="38.500" y2="312.5" stroke="#c4c4c4" stroke-width="0.7"/><path d="M39.200 312.7c1.600-2.500 5.800-2.500 7.400 0c-1.600 2.500-5.800 2.500-7.400 0z" fill="#b8b8b8" stroke="#555" stroke-width="0.7"/><circle cx="42.900" cy="312.7" r="1.300" fill="#666"/><path d="M39.400 315.7l7-6.600" stroke="#444" stroke-width="0.8"/><path d="M47.400 311.1l3.800-2.400l3.800 1.800v3.600l-3.600 2.400l-4-2z" fill="#f08a2c" stroke="#444" stroke-width="0.5"/><path d="M47.400 311.1l4 2l3.600-2.200M51.400 313.1v3.400" fill="none" stroke="#f8c898" stroke-width="0.8"/><path d="M53.200 315.3l1.800-1.200v-3.600" fill="none" stroke="#333" stroke-width="0.700"/><line x1="34.750" y1="324.5" x2="38.500" y2="324.5" stroke="#c4c4c4" stroke-width="0.7"/><path d="M39.200 324.7c1.600-2.500 5.800-2.500 7.400 0c-1.600 2.500-5.800 2.500-7.400 0z" fill="#b8b8b8" stroke="#555" stroke-width="0.7"/><circle cx="42.900" cy="324.7" r="1.300" fill="#666"/><path d="M39.400 327.7l7-6.600" stroke="#444" stroke-width="0.8"/><ellipse cx="51.200" cy="322.9" rx="3.600" ry="1.800" fill="#e8f6fc" stroke="#28a8d8" stroke-width="0.9"/><path d="M47.600 324.9v2.400h7.200v-2.400z" fill="#fff" stroke="#444" stroke-width="0.7"/><path d="M49 324.9v2.400M53.400 324.9v2.400" stroke="#444" stroke-width="0.500"/><line x1="34.750" y1="336.5" x2="38.500" y2="336.5" stroke="#c4c4c4" stroke-width="0.7"/><path d="M39.200 336.7c1.600-2.500 5.800-2.500 7.400 0c-1.600 2.500-5.800 2.500-7.400 0z" fill="#b8b8b8" stroke="#555" stroke-width="0.7"/><circle cx="42.900" cy="336.7" r="1.300" fill="#666"/><path d="M39.400 339.7l7-6.600" stroke="#444" stroke-width="0.8"/><path d="M48.200 334.1l1.400-0.800v5.800M50.800 333.3h3.400M51 333.3l-0.400 2.400c1.800-0.600 3 0.200 3 1.400c0 1.600-1.800 2.400-3.600 1.800M48 336.7c1.200 1.600 1.600 2.400 3 3" fill="none" stroke="#28a8d8" stroke-width="0.9"/><path d="M50.600 339.9l0.600-2l3-2.800l1.400 1.400l-3 2.800z" fill="#c87828" stroke="#3a2a1a" stroke-width="0.4"/><path d="M54.200 335.1l1.400 1.400" stroke="#333" stroke-width="0.7"/><line x1="34.750" y1="348.5" x2="38.500" y2="348.5" stroke="#c4c4c4" stroke-width="0.7"/><path d="M39.200 348.7c1.600-2.500 5.800-2.500 7.400 0c-1.600 2.500-5.800 2.500-7.400 0z" fill="#b8b8b8" stroke="#555" stroke-width="0.7"/><circle cx="42.900" cy="348.7" r="1.300" fill="#666"/><path d="M39.400 351.7l7-6.600" stroke="#444" stroke-width="0.8"/><path d="M50.400 345.1l3.800 0.800l-2.400 5.400l-3.800-0.600z" fill="#f2f8fc" stroke="#555" stroke-width="0.600"/><path d="M47.800 349.7c0.800 1.600 2 2.400 3.600 2l2.800-5.600" fill="none" stroke="#28a8d8" stroke-width="0.9"/><line x1="34.750" y1="360.5" x2="38.500" y2="360.5" stroke="#c4c4c4" stroke-width="0.7"/><path d="M39.200 360.7c1.600-2.500 5.800-2.500 7.400 0c-1.600 2.500-5.800 2.500-7.400 0z" fill="#b8b8b8" stroke="#555" stroke-width="0.7"/><circle cx="42.900" cy="360.7" r="1.300" fill="#666"/><path d="M39.400 363.7l7-6.600" stroke="#444" stroke-width="0.8"/><path d="M47.600 358.9l3.800-2.200l3.800 1.800l-3.600 2.400z" fill="#fff" stroke="#444" stroke-width="0.7"/><path d="M47.600 358.9v3.400l4 2.200v-3.600z" fill="#f4f4f4" stroke="#444" stroke-width="0.7"/><path d="M48.200 359.5l3.200 4.400" stroke="#f08a2c" stroke-width="1.200"/><line x1="34.750" y1="372.5" x2="38.500" y2="372.5" stroke="#c4c4c4" stroke-width="0.7"/><path d="M39.200 372.7c1.600-2.500 5.800-2.500 7.400 0c-1.600 2.500-5.800 2.500-7.400 0z" fill="#b8b8b8" stroke="#555" stroke-width="0.7"/><circle cx="42.900" cy="372.7" r="1.300" fill="#666"/><path d="M39.400 375.7l7-6.600" stroke="#444" stroke-width="0.8"/><path d="M47.400 371.1l3.800-2.400l3.800 1.800v3.600l-3.600 2.400l-4-2z" fill="#f08a2c" stroke="#444" stroke-width="0.5"/><path d="M47.400 371.1l4 2l3.600-2.200M51.400 373.1v3.400" fill="none" stroke="#f8c898" stroke-width="0.8"/><path d="M53.200 375.3l1.800-1.200v-3.600" fill="none" stroke="#333" stroke-width="0.700"/><line x1="34.750" y1="384.5" x2="38.500" y2="384.5" stroke="#c4c4c4" stroke-width="0.7"/><path d="M39 384.5c1.600-2.600 6-2.600 7.600 0c-1.600 2.600-6 2.600-7.600 0z" fill="#fff" stroke="#333" stroke-width="0.7"/><circle cx="42.800" cy="384.5" r="1.700" fill="#222"/><path d="M48.200 382.1l1.400-0.800v5.800M50.800 381.3h3.400M51 381.3l-0.400 2.400c1.800-0.600 3 0.200 3 1.400c0 1.600-1.800 2.400-3.600 1.800M48 384.7c1.200 1.600 1.600 2.400 3 3" fill="none" stroke="#28a8d8" stroke-width="0.9"/><path d="M50.600 387.9l0.600-2l3-2.800l1.400 1.400l-3 2.800z" fill="#c87828" stroke="#3a2a1a" stroke-width="0.4"/><path d="M54.200 383.1l1.400 1.400" stroke="#333" stroke-width="0.7"/><line x1="34.750" y1="396.5" x2="38.500" y2="396.5" stroke="#c4c4c4" stroke-width="0.7"/><path d="M39.200 396.7c1.600-2.500 5.800-2.500 7.400 0c-1.600 2.500-5.800 2.500-7.400 0z" fill="#b8b8b8" stroke="#555" stroke-width="0.7"/><circle cx="42.900" cy="396.7" r="1.300" fill="#666"/><path d="M39.400 399.7l7-6.600" stroke="#444" stroke-width="0.8"/><path d="M47.300 396.7l3.900-2.300l3.900 2.300l-3.900 2.300z" fill="#f8d0dc" stroke="#e8608c" stroke-width="0.9"/><line x1="34.750" y1="408.5" x2="38.500" y2="408.5" stroke="#c4c4c4" stroke-width="0.7"/><path d="M39.200 408.7c1.600-2.500 5.800-2.500 7.400 0c-1.600 2.500-5.800 2.500-7.400 0z" fill="#b8b8b8" stroke="#555" stroke-width="0.7"/><circle cx="42.900" cy="408.7" r="1.300" fill="#666"/><path d="M39.400 411.7l7-6.600" stroke="#444" stroke-width="0.8"/><path d="M48.200 406.1l1.400-0.800v5.800M50.800 405.3h3.400M51 405.3l-0.400 2.400c1.800-0.600 3 0.200 3 1.400c0 1.600-1.800 2.400-3.600 1.800M48 408.7c1.200 1.600 1.600 2.400 3 3" fill="none" stroke="#28a8d8" stroke-width="0.9"/><path d="M50.600 411.9l0.600-2l3-2.800l1.400 1.400l-3 2.800z" fill="#c87828" stroke="#3a2a1a" stroke-width="0.4"/><path d="M54.200 407.1l1.400 1.400" stroke="#333" stroke-width="0.7"/><line x1="34.750" y1="420.5" x2="38.500" y2="420.5" stroke="#c4c4c4" stroke-width="0.7"/><path d="M39.200 420.7c1.600-2.500 5.800-2.500 7.400 0c-1.600 2.500-5.800 2.500-7.400 0z" fill="#b8b8b8" stroke="#555" stroke-width="0.7"/><circle cx="42.900" cy="420.7" r="1.300" fill="#666"/><path d="M39.400 423.7l7-6.600" stroke="#444" stroke-width="0.8"/><path d="M47.300 420.7l3.900-2.300l3.900 2.300l-3.900 2.300z" fill="#f8d0dc" stroke="#e8608c" stroke-width="0.9"/></svg>
<svg style="left:0px;top:0px" width="272" height="500" viewBox="0 0 272 500" ><path d="M255.400 107.6l5-3l5 2.400v4.600l-5 3l-5-2.400z" fill="#f08a2c" stroke="#444" stroke-width="0.5"/><path d="M255.400 107.6l5 2.400l5-3" fill="none" stroke="#f8c898" stroke-width="0.7"/><path d="M261 109.8l3.600-1.600l3 1.400v4.200l-3.600 1.600l-3-1.400z" fill="#fff" stroke="#333" stroke-width="0.7"/><path d="M261 109.8l3 1.400l3.600-1.600M264 111.2v4.200" fill="none" stroke="#333" stroke-width="0.600"/><path d="M256 124.4l6.800-2.400l4.600 5l-6.600 3.400z" fill="#e8e8e8" stroke="#555" stroke-width="0.600"/><path d="M257.600 124.8c2.400-2 5.600-1.400 7.600 1.800" fill="none" stroke="#f08a2c" stroke-width="0.8"/><path d="M256.400 121.60000000000001c3-2 7.600-1.800 9.600 0.600" fill="none" stroke="#28a8d8" stroke-width="0.8"/><path d="M255.600 139.20000000000002l6-3l6 3v4l-6 3.200l-6-3.200z" fill="#a8a8a8" stroke="#444" stroke-width="0.500"/><path d="M255.600 139.20000000000002l6-3l6 3l-6 3z" fill="#f08a2c" stroke="#444" stroke-width="0.500"/><path d="M257 140.20000000000002l4.600 2.400l4.600-2.400" fill="none" stroke="#38b8e8" stroke-width="0.800"/><path d="M255.800 157.4c1.600-3.600 5.600-5.800 9-5.400l2.600 3.400c-3.400 0-6.600 2-8 5.200z" fill="#c8e8f4" stroke="#444" stroke-width="0.600"/><path d="M257 158.6c1.600-3.400 5.400-5.400 8.800-5.200M258.200 159.6c1.600-3.400 5.400-5.200 8.600-5M258.600 154.2l3 3.800M261.600 152.6l3 3.600" fill="none" stroke="#2890b8" stroke-width="0.500"/><path d="M255.600 171.4l3-3.400l6 0.600l3.200 4.600l-3.200 3.200l-6.400-0.800z" fill="#c4c4c4" stroke="#777" stroke-width="0.500"/><path d="M257 171c2.600-1.800 6-1.200 8 1.800" fill="none" stroke="#3898c8" stroke-width="0.900"/><path d="M257.400 173c2.400-1.600 5.400-1 7.200 1.400" fill="none" stroke="#f4f4f4" stroke-width="0.900"/><path d="M255.600 193.1c2.400-4.400 4.600-3 6.600-5c2-2 2.600-3.600 4.600-5" fill="none" stroke="#f08a2c" stroke-width="0.900"/><path d="M262.200 188.1c2-2 2.600-3.600 4.600-5" fill="none" stroke="#28a8d8" stroke-width="0.900"/><path d="M255.600 206.1l6-3.400l6 3.400l-6 3.400z" fill="#e8e8e8" stroke="#444" stroke-width="0.600"/><path d="M255.600 203.7l6-3.600l6 3.600l-6 3.400z" fill="#f08a2c" stroke="#b85a10" stroke-width="0.500"/><path d="M257 207.9l4.600 2.600l4.600-2.600" fill="none" stroke="#444" stroke-width="0.600"/><path d="M255.600 220.1c3-2.800 7-3.600 9.600-2.600l2.400 3c-3-0.600-6.600 0.600-9 3.800z" fill="#8e8e8e" stroke="#555" stroke-width="0.500"/><path d="M256.600 221.3c3-2.800 6.600-3.600 9.600-2.800M257.600 222.7c3-2.800 6.400-3.400 9.400-2.800" fill="none" stroke="#d8d8d8" stroke-width="0.600"/><path d="M255.400 238.0l4-3.400c2.800-0.400 5.400 0 8.200 1.200l-3.400 3c-2.800-0.800-5.800-1-8.800-0.800z" fill="#c8e4f4" stroke="#444" stroke-width="0.700"/><path d="M255.800 248.6l5.600-2.600l5.600 2.600v5.400l-5.600 2.800l-5.600-2.800z" fill="#d8d8d8" stroke="#444" stroke-width="0.600"/><path d="M255.800 248.6l5.600 2.600l5.600-2.600M261.400 251.2v5.600" fill="none" stroke="#666" stroke-width="0.500"/><ellipse cx="261.400" cy="251.0" rx="2.600" ry="2.800" fill="#f08a2c"/><ellipse cx="261.400" cy="249.39999999999998" rx="2.600" ry="1.200" fill="#f8b878"/><path d="M258.400 262v4.400h5.200v-4.400z" fill="#f08a2c"/><ellipse cx="261" cy="262" rx="2.600" ry="1.200" fill="#f8b878"/><path d="M255.600 265.2h8v6.600h-8zM258.200 267h8.400v6h-8.400zM255.600 265.2l2.600 1.800M263.600 265.2l3 1.800M255.600 271.8l2.600 1.200M263.600 271.8l3 1.200" fill="none" stroke="#333" stroke-width="0.600"/><rect x="259.600" y="267.8" width="3" height="3" fill="#888"/><path d="M256 279.9l6-3l5.200 2.600l-6 3.200z" fill="#f4f4f4" stroke="#444" stroke-width="0.700"/><path d="M256 279.9v4.600l5.200 3v-4.800z" fill="#fff" stroke="#444" stroke-width="0.700"/><path d="M256.600 284.7l4.400 2.600M261.200 282.7l6-3.200" fill="none" stroke="#f08a2c" stroke-width="1"/><rect x="256" y="292.0" width="2.600" height="2.600" fill="#fff" stroke="#333" stroke-width="0.500"/><path d="M257.300 294.59999999999997v7.600M257.300 298.0h2" stroke="#333" stroke-width="0.500" fill="none"/><circle cx="260.600" cy="297.59999999999997" r="2.300" fill="#fff" stroke="#f08a2c" stroke-width="0.800"/><circle cx="265.200" cy="297.79999999999995" r="2.300" fill="#fff" stroke="#555" stroke-width="0.600"/><circle cx="260" cy="301.79999999999995" r="1.700" fill="#fff" stroke="#f08a2c" stroke-width="0.700"/><circle cx="260.400" cy="311.7" r="3.200" fill="none" stroke="#f08a2c" stroke-width="1.800" stroke-dasharray="1.600 0.900"/><circle cx="260.400" cy="311.7" r="1.200" fill="#fff" stroke="#f08a2c" stroke-width="0.600"/><circle cx="265" cy="315.9" r="2.600" fill="#fff" stroke="#444" stroke-width="0.700"/><path d="M263 314.7l2 1l2-1M265 315.7v2.600" fill="none" stroke="#444" stroke-width="0.500"/><line x1="256" y1="326" x2="268" y2="326" stroke="#e4e4e4" stroke-width="0.8"/><path d="M260.200 491.700v3.600l-2.200-1.800z" fill="#333"/></svg>
<svg style="left:0px;top:0px" width="400" height="116" viewBox="0 0 400 116" ><path d="M273.600 108.200c0-2.600 1.400-4.600 3.400-4.800l0.400 2.800c1.400 0 2.600 0.800 3 1.800c0.300 1.400-1.400 2.400-3.600 2.400c-2 0-3.200-1-3.200-2.200z" fill="#c4c4c4"/><path d="M274.600 108.600c1 0.800 3 1 4.600 0.200M275.800 106.200l2.200 1.200" fill="none" stroke="#5a6a72" stroke-width="0.600"/><rect x="345.600" y="103.400" width="4" height="5" fill="none" stroke="#fff" stroke-width="0.900"/><path d="M347.200 105h1.800v2.400" fill="none" stroke="#fff" stroke-width="0.800"/><path d="M353.800 103.800l4 4.200M357.800 103.800l-4 4.200" stroke="#fff" stroke-width="1.200"/></svg>
<svg style="left:0px;top:0px" width="960" height="512" viewBox="0 0 960 512" ><defs>
<linearGradient id="bBody" gradientUnits="userSpaceOnUse" x1="541" y1="0" x2="671" y2="0">
 <stop offset="0" stop-color="#6c7272"/><stop offset="0.06" stop-color="#787e7e"/><stop offset="0.40" stop-color="#7e8484"/>
 <stop offset="0.50" stop-color="#90969a"/><stop offset="0.56" stop-color="#8b9191"/><stop offset="0.90" stop-color="#878d8d"/><stop offset="1" stop-color="#7b8181"/>
</linearGradient>
<linearGradient id="bGroove" gradientUnits="userSpaceOnUse" x1="541" y1="0" x2="671" y2="0">
 <stop offset="0" stop-color="#626868"/><stop offset="0.45" stop-color="#676d6d"/><stop offset="0.53" stop-color="#727878"/><stop offset="0.6" stop-color="#606666"/><stop offset="1" stop-color="#5e6464"/>
</linearGradient>
<linearGradient id="bNeck" gradientUnits="userSpaceOnUse" x1="584" y1="0" x2="628" y2="0">
 <stop offset="0" stop-color="#7c8282"/><stop offset="0.3" stop-color="#a0a6a6"/><stop offset="0.55" stop-color="#969c9c"/><stop offset="0.85" stop-color="#7e8484"/><stop offset="1" stop-color="#6c7272"/>
</linearGradient>
<linearGradient id="bInner" gradientUnits="userSpaceOnUse" x1="590" y1="0" x2="623" y2="0">
 <stop offset="0" stop-color="#8a9090"/><stop offset="0.45" stop-color="#a7adad"/><stop offset="0.7" stop-color="#8d9393"/><stop offset="1" stop-color="#7b8181"/>
</linearGradient>
<linearGradient id="bBase" gradientUnits="userSpaceOnUse" x1="544" y1="0" x2="668" y2="0">
 <stop offset="0" stop-color="#646a6a"/><stop offset="0.35" stop-color="#737979"/><stop offset="0.5" stop-color="#7e8484"/><stop offset="0.65" stop-color="#828888"/><stop offset="1" stop-color="#7a8080"/>
</linearGradient>
<linearGradient id="bRefl" gradientUnits="userSpaceOnUse" x1="0" y1="456" x2="0" y2="498">
 <stop offset="0" stop-color="#ffffff" stop-opacity="0.28"/><stop offset="1" stop-color="#ffffff" stop-opacity="0.35"/>
</linearGradient>
<filter id="bl1" x="-50%" y="-50%" width="200%" height="200%"><feGaussianBlur stdDeviation="1.6"/></filter>
<filter id="bl2" x="-50%" y="-50%" width="200%" height="200%"><feGaussianBlur stdDeviation="3"/></filter>
<filter id="bl05" x="-50%" y="-50%" width="200%" height="200%"><feGaussianBlur stdDeviation="0.6"/></filter>
<clipPath id="cBody"><path id="pBody" d="M576.5 195 C576 203 575 210 572.8 215.5 C570.5 221 566 229 561.5 236 C557.500 242.500 553.500 250 551.300 256.500 C550.300 260 549.800 263.500 549.800 266.700 L548.200 277 L544.500 300 L541.700 324 L541.700 416 C542 419 542.800 421 543.800 423 C545 425.500 546.800 427.500 548.200 429.300 L556 441.600 L563 453 C565 456.500 567.500 459 570 461 C573 463.500 577 465.500 580.700 467 C584.500 468.600 589 470.200 593 471 C597.500 472 602 472.300 607 472.300 C611.500 472.300 615.500 471.800 619.400 471 C624 470 629.500 467.500 633.400 465.300 C637.500 463 641 460 644 456.500 C647 453 650.500 449 652.700 446 L661.500 430 L667.700 421.400 C669 419.500 670 417 670.300 414.300 L670.300 324 L666 300 L662.500 277 L660.900 266.700 C660.700 263 660 259.500 658.900 256.500 C657.500 253 656 249.500 654.300 246.200 C652.500 243 650.500 239.500 648.600 236 C646.800 232.500 645.200 229 644 225.700 C642.500 222 641.200 218.500 640.400 215.500 C639.300 211.500 638.500 208 638 205.200 C637.300 201.500 636.700 198 636.300 195 Z"/></clipPath>
</defs><path d="M541 498 L541 472 C541 464 548 458 558 456.500 L654 456.500 C664 458 670.500 464 670.500 472 L670.500 498 Z" fill="url(#bRefl)"/><g clip-path="url(#cBody)"><rect x="535" y="190" width="140" height="290" fill="url(#bBody)"/><path d="M574 200 L606 214 L604 250 L600 296 L548 268 C552 250 566 228 574 200 Z" fill="#5c6262" opacity="0.62" filter="url(#bl2)"/><path d="M556 260 C560 249 568 240 580 236.500 C578 247 569 257 559 264 Z" fill="#101212" opacity="0.95" filter="url(#bl1)"/><path d="M554 262 C558 248 568 238 582 234 C580 248 570 260 558 267 Z" fill="#2a2e2e" opacity="0.5" filter="url(#bl2)"/><path d="M557 262.500 C562 258 568 255.500 575 254.500 C571 259.500 563 263 557.500 264.500 Z" fill="#5e3436" opacity="0.75" filter="url(#bl1)"/><path d="M552 262 C555.500 251 561 242 567 235" fill="none" stroke="#9ea4a4" stroke-width="1.100" opacity="0.5" filter="url(#bl05)"/><path d="M605 214 L629 208 C631 232 628 262 618 297 L606 297 C605 270 605 240 605 214 Z" fill="#c0c6c6" opacity="0.9" filter="url(#bl2)"/><path d="M607 236 L618 232 L614 294 L607 294 Z" fill="#c6cccc" opacity="0.5" filter="url(#bl2)"/><path d="M599.500 234 C597 250 597.500 270 600.500 290 C602 294 606 295 606.500 291 C603.500 270 603 250 605 234 Z" fill="#383e3e" opacity="0.9" filter="url(#bl1)"/><path d="M597.600 246 C596.600 260 597.200 274 599.400 288" fill="none" stroke="#b4baba" stroke-width="0.800" opacity="0.6" filter="url(#bl05)"/><path d="M630 208 C632 235 635 262 637.300 283 L662 270 C660 250 645 235 638 200 Z" fill="#8a9090" opacity="0.6" filter="url(#bl1)"/><path d="M549.800 267 L597.400 293 C603 297 612 299 618 294 L661 270.800 L670.300 324 L670.300 333 L623 359.200 C616 362.500 606 363 599 358 L541.700 328.500 L541.700 324 Z" fill="url(#bBody)"/><path d="M606 298 L603 358 L619 358 L615 298 Z" fill="#969c9e" opacity="0.4" filter="url(#bl2)"/><path d="M541 328.87 L597 357.60 C603 360.60 606 361.80 610.600 361.80 C615 361.80 619 360.80 624 358.40 L671 332.22 L671 338.22 L624 364.40 C619 366.80 615 367.80 610.600 367.80 C606 367.80 603 366.60 597 363.60 L541 334.87 Z" fill="url(#bBody)"/><path d="M541 334.87 L597 363.60 C603 366.60 606 367.80 610.600 367.80 C615 367.80 619 366.80 624 364.40 L671 338.22 L671 342.02 L624 368.20 C619 370.60 615 371.60 610.600 371.60 C606 371.60 603 370.40 597 367.40 L541 338.67 Z" fill="url(#bGroove)"/><path d="M541 328.87 L597 357.60 C603 360.60 606 361.80 610.600 361.80 C615 361.80 619 360.80 624 358.40 L671 332.22" fill="none" stroke="#3c4242" stroke-width="0.55"/><path d="M541 334.87 L597 363.60 C603 366.60 606 367.80 610.600 367.80 C615 367.80 619 366.80 624 364.40 L671 338.22" fill="none" stroke="#444a4a" stroke-width="0.5"/><path d="M541 335.77 L597 364.50 C603 367.50 606 368.70 610.600 368.70 C615 368.70 619 367.70 624 365.30 L671 339.12" fill="none" stroke="#9aa0a0" stroke-width="0.5" opacity="0.5"/><path d="M541 338.67 L597 367.40 C603 370.40 606 371.60 610.600 371.60 C615 371.60 619 370.60 624 368.20 L671 342.02 L671 348.02 L624 374.20 C619 376.60 615 377.60 610.600 377.60 C606 377.60 603 376.40 597 373.40 L541 344.67 Z" fill="url(#bBody)"/><path d="M541 344.67 L597 373.40 C603 376.40 606 377.60 610.600 377.60 C615 377.60 619 376.60 624 374.20 L671 348.02 L671 351.82 L624 378.00 C619 380.40 615 381.40 610.600 381.40 C606 381.40 603 380.20 597 377.20 L541 348.47 Z" fill="url(#bGroove)"/><path d="M541 338.67 L597 367.40 C603 370.40 606 371.60 610.600 371.60 C615 371.60 619 370.60 624 368.20 L671 342.02" fill="none" stroke="#3c4242" stroke-width="0.55"/><path d="M541 344.67 L597 373.40 C603 376.40 606 377.60 610.600 377.60 C615 377.60 619 376.60 624 374.20 L671 348.02" fill="none" stroke="#444a4a" stroke-width="0.5"/><path d="M541 345.57 L597 374.30 C603 377.30 606 378.50 610.600 378.50 C615 378.50 619 377.50 624 375.10 L671 348.92" fill="none" stroke="#9aa0a0" stroke-width="0.5" opacity="0.5"/><path d="M541 348.47 L597 377.20 C603 380.20 606 381.40 610.600 381.40 C615 381.40 619 380.40 624 378.00 L671 351.82 L671 357.82 L624 384.00 C619 386.40 615 387.40 610.600 387.40 C606 387.40 603 386.20 597 383.20 L541 354.47 Z" fill="url(#bBody)"/><path d="M541 354.47 L597 383.20 C603 386.20 606 387.40 610.600 387.40 C615 387.40 619 386.40 624 384.00 L671 357.82 L671 361.62 L624 387.80 C619 390.20 615 391.20 610.600 391.20 C606 391.20 603 390.00 597 387.00 L541 358.27 Z" fill="url(#bGroove)"/><path d="M541 348.47 L597 377.20 C603 380.20 606 381.40 610.600 381.40 C615 381.40 619 380.40 624 378.00 L671 351.82" fill="none" stroke="#3c4242" stroke-width="0.55"/><path d="M541 354.47 L597 383.20 C603 386.20 606 387.40 610.600 387.40 C615 387.40 619 386.40 624 384.00 L671 357.82" fill="none" stroke="#444a4a" stroke-width="0.5"/><path d="M541 355.37 L597 384.10 C603 387.10 606 388.30 610.600 388.30 C615 388.30 619 387.30 624 384.90 L671 358.72" fill="none" stroke="#9aa0a0" stroke-width="0.5" opacity="0.5"/><path d="M541 358.27 L597 387.00 C603 390.00 606 391.20 610.600 391.20 C615 391.20 619 390.20 624 387.80 L671 361.62 L671 367.62 L624 393.80 C619 396.20 615 397.20 610.600 397.20 C606 397.20 603 396.00 597 393.00 L541 364.27 Z" fill="url(#bBody)"/><path d="M541 364.27 L597 393.00 C603 396.00 606 397.20 610.600 397.20 C615 397.20 619 396.20 624 393.80 L671 367.62 L671 371.42 L624 397.60 C619 400.00 615 401.00 610.600 401.00 C606 401.00 603 399.80 597 396.80 L541 368.07 Z" fill="url(#bGroove)"/><path d="M541 358.27 L597 387.00 C603 390.00 606 391.20 610.600 391.20 C615 391.20 619 390.20 624 387.80 L671 361.62" fill="none" stroke="#3c4242" stroke-width="0.55"/><path d="M541 364.27 L597 393.00 C603 396.00 606 397.20 610.600 397.20 C615 397.20 619 396.20 624 393.80 L671 367.62" fill="none" stroke="#444a4a" stroke-width="0.5"/><path d="M541 365.17 L597 393.90 C603 396.90 606 398.10 610.600 398.10 C615 398.10 619 397.10 624 394.70 L671 368.52" fill="none" stroke="#9aa0a0" stroke-width="0.5" opacity="0.5"/><path d="M541 368.07 L597 396.80 C603 399.80 606 401.00 610.600 401.00 C615 401.00 619 400.00 624 397.60 L671 371.42 L671 377.42 L624 403.60 C619 406.00 615 407.00 610.600 407.00 C606 407.00 603 405.80 597 402.80 L541 374.07 Z" fill="url(#bBody)"/><path d="M541 374.07 L597 402.80 C603 405.80 606 407.00 610.600 407.00 C615 407.00 619 406.00 624 403.60 L671 377.42 L671 381.22 L624 407.40 C619 409.80 615 410.80 610.600 410.80 C606 410.80 603 409.60 597 406.60 L541 377.87 Z" fill="url(#bGroove)"/><path d="M541 368.07 L597 396.80 C603 399.80 606 401.00 610.600 401.00 C615 401.00 619 400.00 624 397.60 L671 371.42" fill="none" stroke="#3c4242" stroke-width="0.55"/><path d="M541 374.07 L597 402.80 C603 405.80 606 407.00 610.600 407.00 C615 407.00 619 406.00 624 403.60 L671 377.42" fill="none" stroke="#444a4a" stroke-width="0.5"/><path d="M541 374.97 L597 403.70 C603 406.70 606 407.90 610.600 407.90 C615 407.90 619 406.90 624 404.50 L671 378.32" fill="none" stroke="#9aa0a0" stroke-width="0.5" opacity="0.5"/><path d="M541 377.87 L597 406.60 C603 409.60 606 410.80 610.600 410.80 C615 410.80 619 409.80 624 407.40 L671 381.22 L671 387.22 L624 413.40 C619 415.80 615 416.80 610.600 416.80 C606 416.80 603 415.60 597 412.60 L541 383.87 Z" fill="url(#bBody)"/><path d="M541 383.87 L597 412.60 C603 415.60 606 416.80 610.600 416.80 C615 416.80 619 415.80 624 413.40 L671 387.22 L671 391.02 L624 417.20 C619 419.60 615 420.60 610.600 420.60 C606 420.60 603 419.40 597 416.40 L541 387.67 Z" fill="url(#bGroove)"/><path d="M541 377.87 L597 406.60 C603 409.60 606 410.80 610.600 410.80 C615 410.80 619 409.80 624 407.40 L671 381.22" fill="none" stroke="#3c4242" stroke-width="0.55"/><path d="M541 383.87 L597 412.60 C603 415.60 606 416.80 610.600 416.80 C615 416.80 619 415.80 624 413.40 L671 387.22" fill="none" stroke="#444a4a" stroke-width="0.5"/><path d="M541 384.77 L597 413.50 C603 416.50 606 417.70 610.600 417.70 C615 417.70 619 416.70 624 414.30 L671 388.12" fill="none" stroke="#9aa0a0" stroke-width="0.5" opacity="0.5"/><path d="M541 387.67 L597 416.40 C603 419.40 606 420.60 610.600 420.60 C615 420.60 619 419.60 624 417.20 L671 391.02 L671 397.02 L624 423.20 C619 425.60 615 426.60 610.600 426.60 C606 426.60 603 425.40 597 422.40 L541 393.67 Z" fill="url(#bBody)"/><path d="M541 393.67 L597 422.40 C603 425.40 606 426.60 610.600 426.60 C615 426.60 619 425.60 624 423.20 L671 397.02 L671 400.82 L624 427.00 C619 429.40 615 430.40 610.600 430.40 C606 430.40 603 429.20 597 426.20 L541 397.47 Z" fill="url(#bGroove)"/><path d="M541 387.67 L597 416.40 C603 419.40 606 420.60 610.600 420.60 C615 420.60 619 419.60 624 417.20 L671 391.02" fill="none" stroke="#3c4242" stroke-width="0.55"/><path d="M541 393.67 L597 422.40 C603 425.40 606 426.60 610.600 426.60 C615 426.60 619 425.60 624 423.20 L671 397.02" fill="none" stroke="#444a4a" stroke-width="0.5"/><path d="M541 394.57 L597 423.30 C603 426.30 606 427.50 610.600 427.50 C615 427.50 619 426.50 624 424.10 L671 397.92" fill="none" stroke="#9aa0a0" stroke-width="0.5" opacity="0.5"/><path d="M541 397.47 L597 426.20 C603 429.20 606 430.40 610.600 430.40 C615 430.40 619 429.40 624 427.00 L671 400.82" fill="none" stroke="#3c4242" stroke-width="0.55"/><path d="M541 397.47 L597 426.20 C603 429.20 606 430.40 610.600 430.40 C615 430.40 619 429.40 624 427.00 L671 400.82 L671 430.82 L624 457.00 C619 459.40 615 460.40 610.600 460.40 C606 460.40 603 459.20 597 456.20 L541 427.47 Z" fill="url(#bBody)"/><path d="M548.200 429.300 L569.300 441 L591.200 451.200 L596.500 457.400 L614 457.400 L620.200 452 L661.500 430 L664 440 L640 475 L575 475 L548 440 Z" fill="url(#bBase)"/><path d="M541 416 L548.200 429.300 L569.600 441.600 L574 462.700 L560 470 L541 440 Z" fill="#666c6c"/><path d="M569.600 441.600 L591.200 451.200 L596.500 457.400 L593.900 471 L574 462.700 Z" fill="#727878"/><path d="M596.500 457.400 L614 457.400 L617.600 471 L593.900 471.500 Z" fill="#7d8383"/><path d="M591.200 432.800 L591.200 451.200 L596.500 457.400 L614 457.400 L620.600 451 L620.600 432.800 C616 433.500 596 433.500 591.200 432.800 Z" fill="#838989"/><path d="M600 436 L600 456 L611 456 L611 436 Z" fill="#90969a" opacity="0.3" filter="url(#bl1)"/><path d="M548.200 429.300 L569.300 441 L591.200 451.200 L596.500 457.400 L614 457.400 L620.200 452 L661.500 430" fill="none" stroke="#3f4545" stroke-width="0.55"/><path d="M621 448.600 L664 426.600" fill="none" stroke="#3f4545" stroke-width="0.5"/><path d="M547.300 408 L548.200 429.300 M591.200 432.800 L591.200 451.200 M620.600 432.800 L620.600 450 M664.200 408.200 L664 426.600" fill="none" stroke="#3f4545" stroke-width="0.5"/><path d="M569.600 441.600 L574 462.700 M591.600 455.600 L593.900 471 M619 455.600 L617.600 471" fill="none" stroke="#3f4545" stroke-width="0.5"/><path d="M591.200 451.200 C593 455 595 456 596.500 457.400 M620.200 452 C618 455.500 616 456.500 614 457.400" fill="none" stroke="#3f4545" stroke-width="0.5"/></g><path d="M576.5 195 C576 203 575 210 572.8 215.5 C570.5 221 566 229 561.5 236 C557.500 242.500 553.500 250 551.300 256.500 C550.300 260 549.800 263.500 549.800 266.700 L548.200 277 L544.500 300 L541.700 324 L541.700 416 C542 419 542.800 421 543.800 423 C545 425.500 546.800 427.500 548.200 429.300 L556 441.600 L563 453 C565 456.500 567.500 459 570 461 C573 463.500 577 465.500 580.700 467 C584.500 468.600 589 470.200 593 471 C597.500 472 602 472.300 607 472.300 C611.500 472.300 615.500 471.800 619.400 471 C624 470 629.500 467.500 633.400 465.300 C637.500 463 641 460 644 456.500 C647 453 650.500 449 652.700 446 L661.500 430 L667.700 421.400 C669 419.500 670 417 670.300 414.300 L670.300 324 L666 300 L662.500 277 L660.900 266.700 C660.700 263 660 259.500 658.900 256.500 C657.500 253 656 249.500 654.300 246.200 C652.500 243 650.500 239.500 648.600 236 C646.800 232.500 645.200 229 644 225.700 C642.500 222 641.200 218.500 640.400 215.500 C639.300 211.500 638.500 208 638 205.200 C637.300 201.500 636.700 198 636.300 195 Z" fill="none" stroke="#5a6060" stroke-width="0.6" opacity="0.7"/><path d="M549.800 267 L597.400 293 C603 297 612 299.500 618 294 L636.300 283 L661 270.800" fill="none" stroke="#30363a" stroke-width="0.55"/><path d="M627.700 208.300 C628 216 628.500 224 629 229.800 C630 242 631.600 252 633.200 262.600 L636.300 283" fill="none" stroke="#30363a" stroke-width="0.55"/><path d="M636.10 196.30 L635.84 198.57 L635.07 200.80 L633.80 202.96 L632.05 205.00 L629.86 206.89 L627.25 208.60 L624.28 210.10 L621.00 211.37 L617.46 212.38 L613.72 213.11 L609.84 213.55 L605.90 213.70 L601.96 213.55 L598.08 213.11 L594.34 212.38 L590.80 211.37 L587.52 210.10 L584.55 208.60 L581.94 206.89 L579.75 205.00 L578.00 202.96 L576.73 200.80 L575.96 198.57 L575.70 196.30 L575.700 189 L636.100 189 Z" fill="#7d8383"/><path d="M636.08 196.91 L635.70 199.12 L634.83 201.29 L633.49 203.38 L631.70 205.35 L629.48 207.17 L626.88 208.82 L623.93 210.26 L620.69 211.47 L617.21 212.43 L613.55 213.13 L609.75 213.56 L605.90 213.70 L602.05 213.56 L598.25 213.13 L594.59 212.43 L591.11 211.47 L587.87 210.26 L584.92 208.82 L582.32 207.17 L580.10 205.35 L578.31 203.38 L576.97 201.29 L576.10 199.12 L575.72 196.91" fill="none" stroke="#363c3c" stroke-width="0.55"/><path d="M635.98 192.81 L635.60 195.02 L634.74 197.19 L633.40 199.28 L631.61 201.25 L629.40 203.07 L626.81 204.72 L623.87 206.16 L620.65 207.37 L617.18 208.33 L613.52 209.03 L609.74 209.46 L605.90 209.60 L602.06 209.46 L598.28 209.03 L594.62 208.33 L591.15 207.37 L587.93 206.16 L584.99 204.72 L582.40 203.07 L580.19 201.25 L578.40 199.28 L577.06 197.19 L576.20 195.02 L575.82 192.81" fill="none" stroke="#363c3c" stroke-width="0.5"/><ellipse cx="605.9" cy="191" rx="30" ry="17.400" fill="#757b7b"/><ellipse cx="605.9" cy="189" rx="30" ry="17.400" fill="#8b9191" stroke="#4a5050" stroke-width="0.45"/><path d="M633.71 196.48 L633.21 197.24 L632.64 197.98 L632.00 198.71 L631.32 199.42 L630.57 200.10 L629.77 200.77 L628.92 201.41 L628.01 202.03 L627.06 202.63 L626.06 203.20 L625.01 203.74 L623.92 204.25 L622.79 204.73 L621.62 205.17 L620.42 205.59 L619.18 205.97 L617.92 206.32 L616.63 206.63 L615.31 206.91 L613.98 207.15 L612.62 207.35 L611.25 207.52 L609.87 207.64 L608.48 207.73" fill="none" stroke="#c8cece" stroke-width="1.300" opacity="0.7" filter="url(#bl05)"/><path d="M632.73 183.13 L633.12 183.64 L633.49 184.17 L633.82 184.69 L634.13 185.23 L634.41 185.77 L634.65 186.31 L634.87 186.86 L635.05 187.41 L635.20 187.97 L635.32 188.53 L635.41 189.09 L635.47 189.65 L635.50 190.21 L635.49 190.78 L635.46 191.34 L635.39 191.90 L635.29 192.46 L635.16 193.02 L634.99 193.57 L634.80 194.12 L634.57 194.67 L634.32 195.21 L634.03 195.75 L633.71 196.28" fill="none" stroke="#b9bfbf" stroke-width="1.500" opacity="0.8" filter="url(#bl05)"/><path d="M580.27 199.00 L579.74 198.45 L579.26 197.89 L578.81 197.33 L578.39 196.75 L578.01 196.17 L577.67 195.57 L577.37 194.97 L577.10 194.37 L576.87 193.76 L576.68 193.14 L576.53 192.52 L576.41 191.90 L576.34 191.28 L576.30 190.65 L576.31 190.02 L576.35 189.40 L576.43 188.78 L576.55 188.15 L576.71 187.54 L576.91 186.92 L577.15 186.31 L577.42 185.71 L577.74 185.11 L578.09 184.52" fill="none" stroke="#d8dcdc" stroke-width="1.100" opacity="0.8" filter="url(#bl05)"/><path d="M603.30 208.43 L601.90 208.34 L600.51 208.21 L599.13 208.05 L597.77 207.84 L596.42 207.60 L595.10 207.32 L593.80 207.01 L592.53 206.66 L591.28 206.28 L590.07 205.86 L588.90 205.41 L587.76 204.93 L586.66 204.41 L585.61 203.87 L584.60 203.30 L583.64 202.70 L582.73 202.08 L581.87 201.43 L581.06 200.76 L580.31 200.07 L579.62 199.36 L578.98 198.63 L578.41 197.88 L577.90 197.12" fill="none" stroke="#3a4040" stroke-width="1" opacity="0.75" filter="url(#bl05)"/><ellipse cx="605.9" cy="188.600" rx="26.400" ry="15.300" fill="#737979" stroke="#41474a" stroke-width="0.5"/><path d="M603.67 203.54 L602.37 203.46 L601.09 203.34 L599.82 203.18 L598.56 202.98 L597.32 202.74 L596.10 202.47 L594.91 202.17 L593.75 201.83 L592.62 201.45 L591.52 201.05 L590.46 200.61 L589.44 200.14 L588.47 199.64 L587.54 199.11 L586.65 198.56 L585.82 197.98 L585.04 197.38 L584.31 196.75 L583.64 196.11 L583.02 195.44 L582.47 194.76 L581.97 194.06 L581.54 193.35 L581.17 192.63" fill="none" stroke="#dfe4e4" stroke-width="1.400" opacity="0.85" filter="url(#bl05)"/><path d="M625.51 198.31 L624.84 198.76 L624.13 199.19 L623.40 199.60 L622.64 200.00 L621.85 200.38 L621.04 200.74 L620.20 201.08 L619.34 201.40 L618.46 201.70 L617.56 201.98 L616.63 202.24 L615.70 202.47 L614.74 202.69 L613.78 202.88 L612.80 203.05 L611.80 203.20 L610.80 203.33 L609.79 203.43 L608.78 203.51 L607.76 203.56 L606.74 203.59 L605.71 203.60 L604.69 203.58 L603.67 203.54" fill="none" stroke="#a8aeae" stroke-width="1.200" opacity="0.8" filter="url(#bl05)"/><ellipse cx="605.9" cy="187.400" rx="24" ry="13.900" fill="#666c6c" stroke="#3c4242" stroke-width="0.45"/><path d="M626.16 194.15 L625.45 194.82 L624.67 195.46 L623.83 196.08 L622.92 196.66 L621.96 197.22 L620.94 197.74 L619.87 198.23 L618.76 198.68 L617.60 199.09 L616.40 199.46 L615.17 199.80 L613.90 200.09 L612.61 200.33 L611.30 200.54 L609.96 200.69 L608.62 200.81 L607.26 200.88 L605.90 200.90 L604.54 200.88 L603.18 200.81 L601.84 200.69 L600.50 200.54 L599.19 200.33 L597.90 200.09" fill="none" stroke="#9aa0a0" stroke-width="1" opacity="0.7" filter="url(#bl05)"/><path d="M584.200 167 L584.200 186.500 A21.900 12.400 0 0 0 628 186.500 L628 167 Z" fill="url(#bNeck)"/><path d="M584.200 167 L584.200 186.500 A21.900 12.400 0 0 0 628 186.500 L628 167" fill="none" stroke="#4a5050" stroke-width="0.5"/><ellipse cx="606.100" cy="167.100" rx="21.900" ry="12.700" fill="#7b8181" stroke="#474d4d" stroke-width="0.55"/><ellipse cx="606.400" cy="166.800" rx="16.400" ry="9.400" fill="url(#bInner)" stroke="#474d4d" stroke-width="0.55"/><path d="M590.500 169 A16.400 9.400 0 0 0 622.300 169 A18 8 0 0 1 590.500 169 Z" fill="#9aa0a0" opacity="0.5"/></svg>
<svg style="left:0px;top:0px" width="960" height="512" viewBox="0 0 960 512" ><path d="M307.500 438.400 L321.800 430.200 L336.200 438.800 L336.200 454.400 L321.800 462.800 L307.500 454.400 Z" fill="#7e7e7e"/><path d="M307.500 438.400 L321.800 430.200 L336.200 438.800 L321.800 447 Z" fill="#858585"/><path d="M307.500 438.400 L321.800 447 L321.800 462.800 L307.500 454.400 Z" fill="#7c7c7c"/><path d="M321.800 447 L336.200 438.800 L336.200 454.400 L321.800 462.800 Z" fill="#828282"/><path d="M307.500 438.400 L321.800 447 L336.200 438.800 M321.800 447 L321.800 462.800" fill="none" stroke="#b4b4b4" stroke-width="0.7"/><path d="M320.800 438 L320.800 426 L319.600 426 L321.800 417.800 L324 426 L322.800 426 L322.800 438 Z" fill="#0a22c8"/><path d="M336 436.600 L342.500 433.400 L342 432.200 L347.200 432.400 L343.800 436.400 L343.300 435.200 L336.800 438.400 Z" fill="#2aa43a"/><path d="M328.600 450 L340 456.200 L340.600 455 L345.600 460 L338.600 459 L339.200 457.800 L327.800 451.600 Z" fill="#d02a30"/></svg>
<!-- text -->
<span class="t" style="left:2.60px;top:1.01px;font-size:11.4px;color:#ffffff;font-weight:bold;letter-spacing:0.586px;">NX</span>
<span class="t" style="left:201.00px;top:2.39px;font-size:7.0px;color:#ffffff;letter-spacing:-0.172px;">Ventana</span>
<span class="t" style="left:504.00px;top:2.44px;font-size:7.6px;color:#ffffff;letter-spacing:0.025px;">NX Student Edition - Modelado</span>
<span class="t" style="left:870.40px;top:1.66px;font-size:7.4px;color:#ffffff;font-weight:bold;letter-spacing:0.233px;">SIEMENS</span>
<span class="t" style="left:10.00px;top:17.60px;font-size:8.0px;color:#ffffff;letter-spacing:-0.098px;">Archivo</span>
<span class="t" style="left:53.30px;top:17.60px;font-size:8.0px;color:#ffffff;">Inicio</span>
<span class="t" style="left:80.70px;top:17.60px;font-size:8.0px;color:#ffffff;letter-spacing:-0.209px;">Curva</span>
<span class="t" style="left:109.70px;top:17.60px;font-size:8.0px;color:#ffffff;letter-spacing:-0.128px;">Superficie</span>
<span class="t" style="left:152.70px;top:17.60px;font-size:8.0px;color:#ffffff;letter-spacing:-0.331px;">Ensambles</span>
<span class="t" style="left:198.30px;top:17.60px;font-size:8.0px;color:#ffffff;letter-spacing:-0.071px;">Modelado de polígonos</span>
<span class="t" style="left:288.70px;top:17.60px;font-size:8.0px;color:#ffffff;letter-spacing:-0.154px;">Diseño para Fabricación aditiva</span>
<span class="t" style="left:404.70px;top:17.60px;font-size:8.0px;color:#ffffff;letter-spacing:-0.127px;">Ingeniería inversa</span>
<span class="t" style="left:475.00px;top:17.60px;font-size:8.0px;color:#ffffff;letter-spacing:-0.197px;">Análisis</span>
<span class="t" style="left:510.00px;top:17.60px;font-size:8.0px;color:#ffffff;letter-spacing:-0.188px;">Vista</span>
<span class="t" style="left:535.00px;top:17.60px;font-size:8.0px;color:#ffffff;letter-spacing:-0.265px;">Selección</span>
<span class="t" style="left:621.00px;top:17.60px;font-size:8.0px;color:#ffffff;letter-spacing:-0.110px;">Herramientas</span>
<span class="t" style="left:676.00px;top:17.60px;font-size:8.0px;color:#ffffff;letter-spacing:-0.311px;">PMI</span>
<span class="t" style="left:697.70px;top:17.60px;font-size:8.0px;color:#ffffff;letter-spacing:-0.147px;">Aplicación</span>
<span class="t" style="left:741.00px;top:17.60px;font-size:8.0px;color:#ffffff;letter-spacing:-0.062px;">Sector industrial</span>
<span class="t" style="left:576.00px;top:17.60px;font-size:8.0px;color:#f0d584;letter-spacing:-0.244px;">Renderizar</span>
<span class="t" style="left:806.00px;top:17.34px;font-size:6.4px;color:#a9a9a9;letter-spacing:0.040px;">Escriba aquí para buscar</span>
<span class="t" style="left:18.00px;top:51.26px;font-size:7.3px;color:#2b2b2b;letter-spacing:-0.283px;">Asignar los</span>
<span class="t" style="left:6.50px;top:60.46px;font-size:7.3px;color:#2b2b2b;letter-spacing:-0.293px;">materiales visuales</span>
<span class="t" style="left:10.50px;top:71.66px;font-size:7.3px;color:#1179a8;letter-spacing:-0.219px;">Ajuste inicial</span>
<span class="t" style="left:74.50px;top:51.26px;font-size:7.3px;color:#2b2b2b;letter-spacing:-0.372px;">Preferencias</span>
<span class="t" style="left:74.50px;top:60.46px;font-size:7.3px;color:#2b2b2b;letter-spacing:-0.408px;">de la escena</span>
<span class="t" style="left:126.00px;top:32.66px;font-size:7.3px;color:#2b2b2b;letter-spacing:-0.206px;">Mapa de UV</span>
<span class="t" style="left:126.00px;top:45.66px;font-size:7.3px;color:#2b2b2b;letter-spacing:-0.299px;">Calcomanía autoadhesiva</span>
<span class="t" style="left:126.00px;top:58.86px;font-size:7.3px;color:#2b2b2b;letter-spacing:-0.272px;">Materiales de la pieza</span>
<span class="t" style="left:99.50px;top:71.66px;font-size:7.3px;color:#1179a8;letter-spacing:-0.226px;">Ajuste inicial de Studio</span>
<span class="t" style="left:229.00px;top:37.26px;font-size:7.3px;color:#2b2b2b;letter-spacing:-0.210px;">Exportar una imagen de alta resolución</span>
<span class="t" style="left:239.00px;top:55.26px;font-size:7.3px;color:#2b2b2b;letter-spacing:-0.271px;">Aristas de la cara</span>
<span class="t" style="left:224.00px;top:71.66px;font-size:7.3px;color:#1179a8;letter-spacing:-0.262px;">Visualización de Estudio avanzado</span>
<span class="t" style="left:379.50px;top:51.26px;font-size:7.3px;color:#2b2b2b;letter-spacing:-0.406px;">Descargar el</span>
<span class="t" style="left:360.00px;top:60.46px;font-size:7.3px;color:#2b2b2b;letter-spacing:-0.256px;">renderizado sin conexión</span>
<span class="t" style="left:380.50px;top:71.66px;font-size:7.3px;color:#1179a8;letter-spacing:-0.105px;">Utilidad</span>
<span class="t" style="left:14.50px;top:85.86px;font-size:7.3px;color:#2b2b2b;letter-spacing:-0.066px;">Menú</span>
<span class="t" style="left:52.00px;top:85.86px;font-size:7.3px;color:#2b2b2b;letter-spacing:-0.162px;">No hay ningún filtro d...</span>
<span class="t" style="left:154.50px;top:85.86px;font-size:7.3px;color:#2b2b2b;letter-spacing:-0.234px;">Ensamble total</span>
<span class="t" style="left:21.00px;top:101.71px;font-size:7.9px;color:#2b2b2b;letter-spacing:-0.213px;">Navegador de pieza</span>
<span class="t" style="left:23.00px;top:116.04px;font-size:7.6px;color:#2b2b2b;">Nombre</span>
<span class="t" style="left:148.00px;top:116.04px;font-size:7.6px;color:#2b2b2b;letter-spacing:-0.535px;">F...</span>
<span class="t" style="left:163.00px;top:116.04px;font-size:7.6px;color:#2b2b2b;letter-spacing:-0.602px;">A...</span>
<span class="t" style="left:178.00px;top:116.04px;font-size:7.6px;color:#2b2b2b;letter-spacing:-0.027px;">Comentario</span>
<span class="t" style="left:39.00px;top:127.94px;font-size:7.6px;color:#2b2b2b;letter-spacing:-0.030px;">Modo de modelado con histo...</span>
<span class="t" style="left:39.00px;top:139.94px;font-size:7.6px;color:#2b2b2b;letter-spacing:0.011px;">Vistas del modelo</span>
<span class="t" style="left:47.00px;top:151.94px;font-size:7.6px;color:#2b2b2b;letter-spacing:-0.330px;">Cámaras</span>
<span class="t" style="left:39.00px;top:163.94px;font-size:7.6px;color:#2b2b2b;letter-spacing:-0.093px;">Conjuntos de referencia</span>
<span class="t" style="left:47.00px;top:175.94px;font-size:7.6px;color:#2b2b2b;letter-spacing:0.091px;">Historial del modelo</span>
<span class="t" style="left:57.00px;top:187.94px;font-size:7.6px;color:#a4a4a4;letter-spacing:-0.194px;">Sistema de coordenadas...</span>
<span class="t" style="left:57.00px;top:199.94px;font-size:7.6px;color:#a4a4a4;letter-spacing:-0.591px;">&quot;SKETCH_000&quot;</span>
<span class="t" style="left:57.00px;top:211.94px;font-size:7.6px;color:#a4a4a4;letter-spacing:-0.105px;">Plano de datum (2)</span>
<span class="t" style="left:57.00px;top:223.94px;font-size:7.6px;color:#a4a4a4;letter-spacing:-0.591px;">&quot;SKETCH_001&quot;</span>
<span class="t" style="left:57.00px;top:235.94px;font-size:7.6px;color:#a4a4a4;letter-spacing:-0.591px;">&quot;SKETCH_002&quot;</span>
<span class="t" style="left:57.00px;top:247.94px;font-size:7.6px;color:#a4a4a4;letter-spacing:-0.114px;">Superficie de Estudio (5)</span>
<span class="t" style="left:57.00px;top:259.94px;font-size:7.6px;color:#a4a4a4;letter-spacing:-0.141px;">Figura de simetría (6)</span>
<span class="t" style="left:57.00px;top:271.94px;font-size:7.6px;color:#a4a4a4;letter-spacing:-0.085px;">Área de relleno (7)</span>
<span class="t" style="left:57.00px;top:283.94px;font-size:7.6px;color:#a4a4a4;letter-spacing:-0.317px;">Coser (8)</span>
<span class="t" style="left:57.00px;top:295.94px;font-size:7.6px;color:#a4a4a4;letter-spacing:-0.317px;">Coser (9)</span>
<span class="t" style="left:57.00px;top:307.94px;font-size:7.6px;color:#a4a4a4;letter-spacing:-0.105px;">Redondeo de arista (10)</span>
<span class="t" style="left:57.00px;top:319.94px;font-size:7.6px;color:#a4a4a4;letter-spacing:-0.094px;">Extrudir (11)</span>
<span class="t" style="left:57.00px;top:331.94px;font-size:7.6px;color:#a4a4a4;letter-spacing:-0.591px;">&quot;SKETCH_003&quot;</span>
<span class="t" style="left:57.00px;top:343.94px;font-size:7.6px;color:#a4a4a4;letter-spacing:-0.133px;">Barrido (13)</span>
<span class="t" style="left:57.00px;top:355.94px;font-size:7.6px;color:#a4a4a4;letter-spacing:-0.338px;">Coser (14)</span>
<span class="t" style="left:57.00px;top:367.94px;font-size:7.6px;color:#a4a4a4;letter-spacing:-0.105px;">Redondeo de arista (15)</span>
<span class="t" style="left:57.00px;top:379.94px;font-size:7.6px;color:#2b2b2b;letter-spacing:-0.591px;">&quot;SKETCH_004&quot;</span>
<span class="t" style="left:57.00px;top:391.94px;font-size:7.6px;color:#a4a4a4;letter-spacing:-0.122px;">Plano de datum (17)</span>
<span class="t" style="left:57.00px;top:403.94px;font-size:7.6px;color:#a4a4a4;letter-spacing:-0.591px;">&quot;SKETCH_005&quot;</span>
<span class="t" style="left:57.00px;top:415.94px;font-size:7.6px;color:#a4a4a4;letter-spacing:-0.122px;">Plano de datum (19)</span>
<span class="t" style="left:33.00px;top:441.13px;font-size:8.8px;color:#0f5f86;letter-spacing:-0.028px;">Búsqueda</span>
<span class="t" style="left:33.00px;top:455.13px;font-size:8.8px;color:#0f5f86;letter-spacing:-0.054px;">Dependencias</span>
<span class="t" style="left:33.00px;top:469.23px;font-size:8.8px;color:#0f5f86;letter-spacing:-0.075px;">Detalles</span>
<span class="t" style="left:33.00px;top:483.33px;font-size:8.8px;color:#0f5f86;letter-spacing:0.033px;">Vista preliminar</span>
<span class="t" style="left:283.00px;top:99.66px;font-size:7.3px;color:#ffffff;letter-spacing:0.036px;">shape_model1.prt</span>
<span class="t" style="left:273.50px;top:113.55px;font-size:8.6px;color:#f0524d;letter-spacing:-0.121px;">NX Student Edition - Not to be used for commercial purposes</span>
<span class="t" style="left:2.00px;top:499.77px;font-size:7.2px;color:#1a1a1a;font-weight:bold;letter-spacing:-0.147px;">Seleccione los objetos y utilice el B3R o pulse dos veces un objeto</span>
<span class="t" style="left:319.50px;top:407.44px;font-size:6.4px;color:#5a6ef0;letter-spacing:0.094px;">Z</span>
<span class="t" style="left:347.50px;top:424.64px;font-size:6.4px;color:#6db56d;letter-spacing:0.234px;">Y</span>
<span class="t" style="left:348.00px;top:456.64px;font-size:6.4px;color:#d05a5a;letter-spacing:0.734px;">X</span>
</body></html>
